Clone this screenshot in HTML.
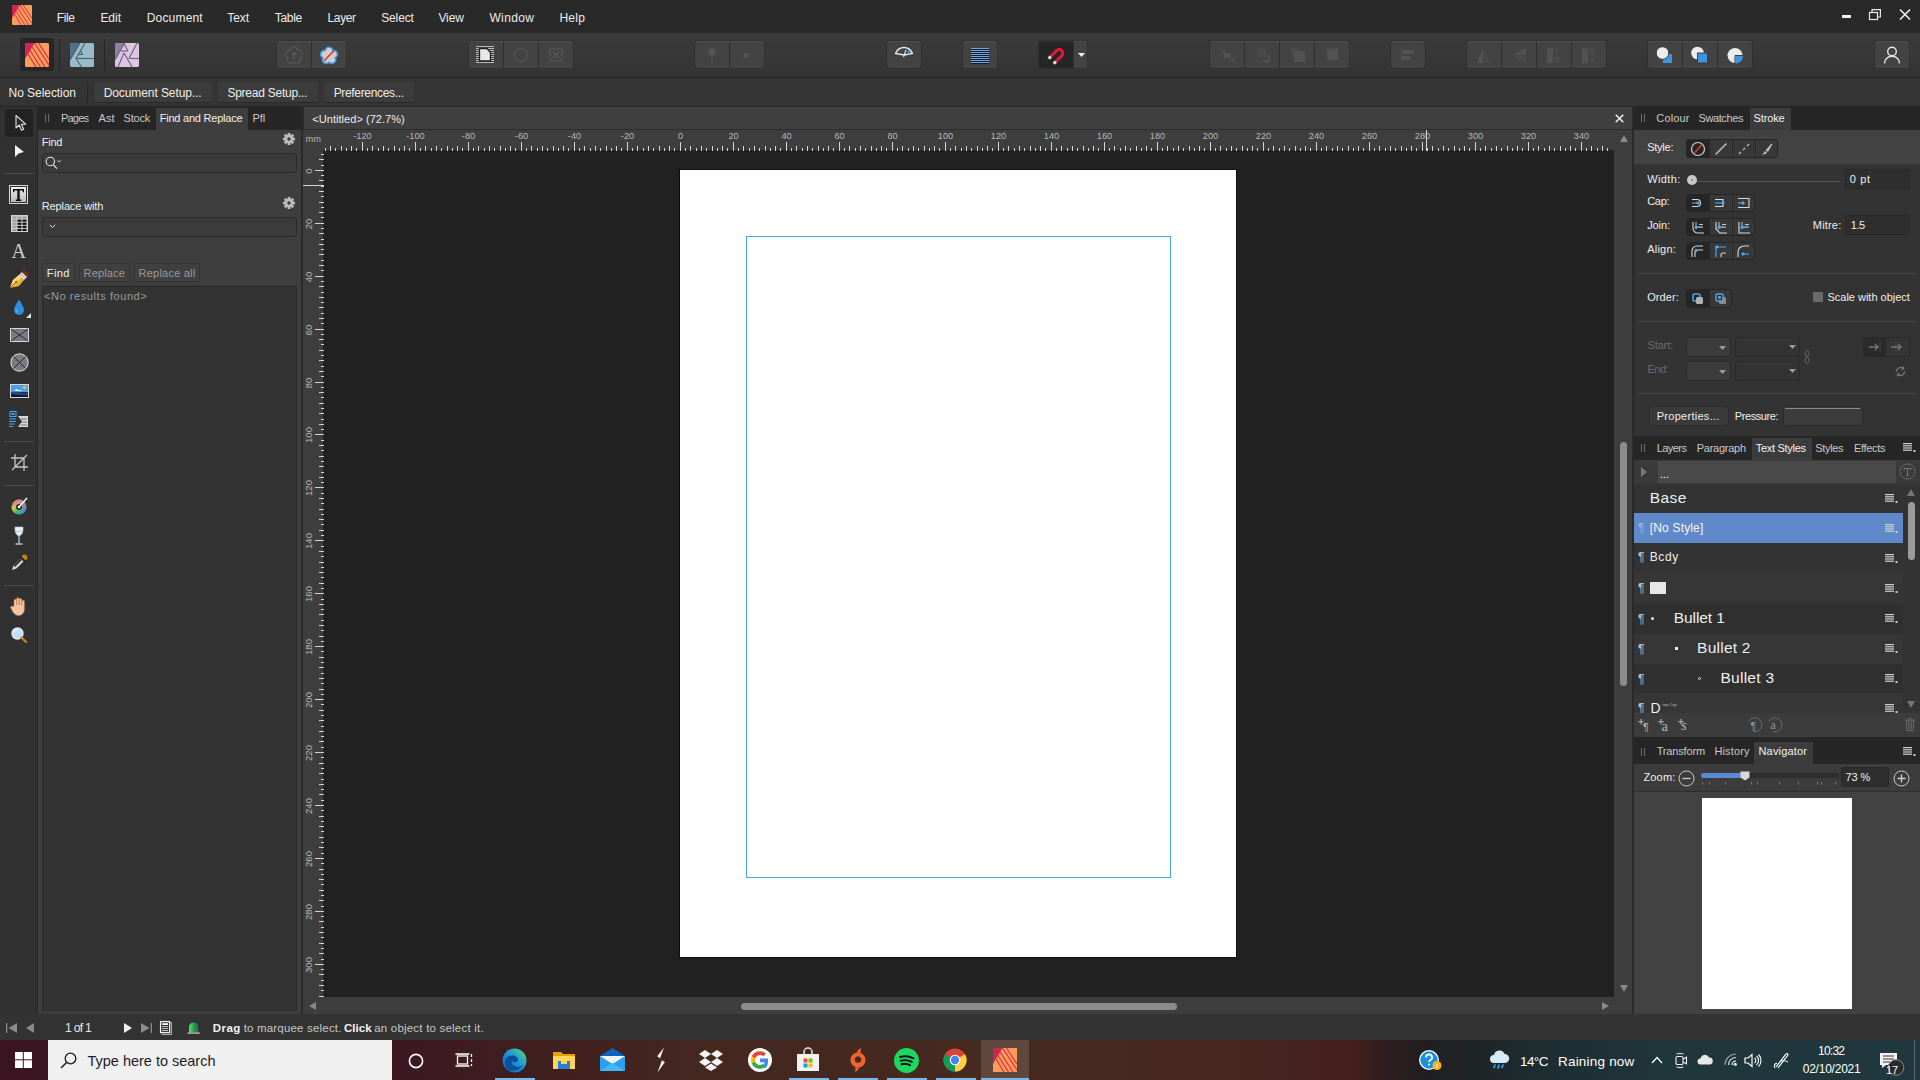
<!DOCTYPE html>
<html><head><meta charset="utf-8">
<style>
*{box-sizing:border-box;margin:0;padding:0}
html,body{width:1920px;height:1080px;overflow:hidden;background:#2b2b2b;font-family:"Liberation Sans",sans-serif;color:#e6e6e6;font-size:12px;position:relative}
.a{position:absolute}
.t{position:absolute;white-space:nowrap;line-height:1}
svg.a{overflow:visible}
</style></head><body>
<div class="a" style="left:0px;top:0px;width:1920px;height:33px;background:#292929;"></div>
<svg class="a" style="left:12px;top:5px" width="20" height="20" viewBox="0 0 24 24"><defs><clipPath id="pc125"><rect x="0" y="0" width="24" height="24" rx="1.5"/></clipPath></defs>
<g clip-path="url(#pc125)"><rect width="24" height="24" fill="#ff9c58"/>
<polygon points="0,0 9.5,0 0,16" fill="#cf2651"/>
<g stroke="#cf2651" stroke-width="1.1">
<line x1="9.5" y1="0" x2="24" y2="22"/><line x1="13.5" y1="0" x2="24" y2="16"/>
<line x1="7.2" y1="4" x2="20" y2="24"/><line x1="5" y1="7.5" x2="15.5" y2="24"/><line x1="3" y1="11" x2="11" y2="24"/>
</g></g></svg>
<div class="t" style="left:56.699999999999996px;top:11.84px;font-size:12px;color:#ececec;font-weight:normal;font-family:'Liberation Sans',sans-serif;letter-spacing:-0.345px;">File</div>
<div class="t" style="left:100.4px;top:11.84px;font-size:12px;color:#ececec;font-weight:normal;font-family:'Liberation Sans',sans-serif;letter-spacing:-0.026px;">Edit</div>
<div class="t" style="left:146.70000000000002px;top:11.84px;font-size:12px;color:#ececec;font-weight:normal;font-family:'Liberation Sans',sans-serif;letter-spacing:0.187px;">Document</div>
<div class="t" style="left:227.3px;top:11.84px;font-size:12px;color:#ececec;font-weight:normal;font-family:'Liberation Sans',sans-serif;letter-spacing:-0.069px;">Text</div>
<div class="t" style="left:274.7px;top:11.84px;font-size:12px;color:#ececec;font-weight:normal;font-family:'Liberation Sans',sans-serif;letter-spacing:-0.296px;">Table</div>
<div class="t" style="left:327.5px;top:11.84px;font-size:12px;color:#ececec;font-weight:normal;font-family:'Liberation Sans',sans-serif;letter-spacing:-0.354px;">Layer</div>
<div class="t" style="left:381.2px;top:11.84px;font-size:12px;color:#ececec;font-weight:normal;font-family:'Liberation Sans',sans-serif;letter-spacing:-0.130px;">Select</div>
<div class="t" style="left:438.4px;top:11.84px;font-size:12px;color:#ececec;font-weight:normal;font-family:'Liberation Sans',sans-serif;letter-spacing:-0.064px;">View</div>
<div class="t" style="left:489.4px;top:11.84px;font-size:12px;color:#ececec;font-weight:normal;font-family:'Liberation Sans',sans-serif;letter-spacing:0.384px;">Window</div>
<div class="t" style="left:559.4px;top:11.84px;font-size:12px;color:#ececec;font-weight:normal;font-family:'Liberation Sans',sans-serif;letter-spacing:0.307px;">Help</div>
<div class="a" style="left:1842px;top:15px;width:9px;height:3px;background:#f0f0f0;"></div>
<svg class="a" style="left:1869px;top:9px;" width="13" height="11" viewBox="0 0 13 11"><rect x="0.5" y="3.5" width="8" height="7" fill="none" stroke="#e8e8e8" stroke-width="1.2"/><path d="M3 3.5V0.6h8.4v7.4H8.5" fill="none" stroke="#e8e8e8" stroke-width="1.2"/></svg>
<svg class="a" style="left:1899px;top:9px;" width="12" height="11" viewBox="0 0 12 11"><path d="M1 0.5L11 10.5M11 0.5L1 10.5" stroke="#f0f0f0" stroke-width="1.6"/></svg>
<div class="a" style="left:0px;top:33px;width:1920px;height:44px;background:linear-gradient(#3b3b3b,#343434);"></div>
<div class="a" style="left:0px;top:77px;width:1920px;height:1px;background:#232323;"></div>
<div class="a" style="left:20px;top:38px;width:34px;height:33px;background:#262626;border-radius:3px;"></div>
<svg class="a" style="left:25px;top:43px" width="24" height="24" viewBox="0 0 24 24"><defs><clipPath id="pc2543"><rect x="0" y="0" width="24" height="24" rx="1.5"/></clipPath></defs>
<g clip-path="url(#pc2543)"><rect width="24" height="24" fill="#ff9c58"/>
<polygon points="0,0 9.5,0 0,16" fill="#cf2651"/>
<g stroke="#cf2651" stroke-width="1.1">
<line x1="9.5" y1="0" x2="24" y2="22"/><line x1="13.5" y1="0" x2="24" y2="16"/>
<line x1="7.2" y1="4" x2="20" y2="24"/><line x1="5" y1="7.5" x2="15.5" y2="24"/><line x1="3" y1="11" x2="11" y2="24"/>
</g></g></svg>
<div class="a" style="left:59px;top:39px;width:1px;height:32px;background:#262626;"></div>
<svg class="a" style="left:70px;top:43px;" width="24" height="24" viewBox="0 0 24 24"><rect width="24" height="24" rx="1.5" fill="#97bcc8"/><polygon points="0,0 10,0 0,17" fill="#577089"/>
<g stroke="#4a5f70" stroke-width="1.1" fill="none"><line x1="10" y1="0" x2="0" y2="17"/><line x1="15" y1="0" x2="6" y2="15.5"/><path d="M6 15.5L11.5 24"/><path d="M6 15.5H24"/><path d="M8.5 11.5L12.5 11.5L10.5 8"/></g></svg>
<div class="a" style="left:104px;top:39px;width:1px;height:32px;background:#262626;"></div>
<svg class="a" style="left:115px;top:43px;" width="24" height="24" viewBox="0 0 24 24"><rect width="24" height="24" rx="1.5" fill="#dcc6e0"/><polygon points="0,0 10,0 0,17" fill="#8e7fa3"/>
<g stroke="#6f5f80" stroke-width="1.1" fill="none"><path d="M9.5 0L0 17"/><path d="M22 0L14 15.5"/><path d="M6 8H13"/><path d="M9 0.5L13 8"/><path d="M14 15.5H24"/><path d="M9 10L3 24"/><path d="M9 10L17 24"/></g></svg>
<div class="a" style="left:276px;top:40px;width:71px;height:29px;background:#313131;border-radius:3px;"></div>
<div class="a" style="left:277px;top:41px;width:69px;height:27px;background:#434343;border-radius:2px;border-top:1px solid #4e4e4e;"></div>
<div class="a" style="left:311px;top:42px;width:1px;height:26px;background:#2f2f2f;"></div>
<svg class="a" style="left:284px;top:45px;" width="20" height="22" viewBox="0 0 20 22"><path d="M18.11,10.70 L17.96,11.03 L17.78,11.35 L17.56,11.65 L17.30,11.93 L17.00,12.19 L16.64,12.40 L16.17,12.56 L16.08,12.82 L16.37,13.22 L16.54,13.61 L16.63,13.99 L16.68,14.37 L16.68,14.74 L16.64,15.11 L16.56,15.47 L16.45,15.82 L16.31,16.15 L16.14,16.47 L15.94,16.77 L15.72,17.05 L15.47,17.31 L15.20,17.55 L14.91,17.76 L14.60,17.94 L14.27,18.10 L13.94,18.23 L13.59,18.32 L13.23,18.39 L12.87,18.42 L12.51,18.41 L12.14,18.38 L11.78,18.30 L11.43,18.18 L11.08,18.03 L10.75,17.82 L10.43,17.54 L10.13,17.14 L9.87,17.14 L9.57,17.54 L9.25,17.82 L8.92,18.03 L8.57,18.18 L8.22,18.30 L7.86,18.38 L7.49,18.41 L7.13,18.42 L6.77,18.39 L6.41,18.32 L6.06,18.23 L5.73,18.10 L5.40,17.94 L5.09,17.76 L4.80,17.55 L4.53,17.31 L4.28,17.05 L4.06,16.77 L3.86,16.47 L3.69,16.15 L3.55,15.82 L3.44,15.47 L3.36,15.11 L3.32,14.74 L3.32,14.37 L3.37,13.99 L3.46,13.61 L3.63,13.22 L3.92,12.82 L3.83,12.56 L3.36,12.40 L3.00,12.19 L2.70,11.93 L2.44,11.65 L2.22,11.35 L2.04,11.03 L1.89,10.70 L1.77,10.36 L1.69,10.00 L1.64,9.64 L1.62,9.28 L1.64,8.92 L1.69,8.57 L1.77,8.21 L1.88,7.87 L2.02,7.54 L2.19,7.22 L2.39,6.92 L2.62,6.64 L2.87,6.38 L3.14,6.14 L3.44,5.93 L3.75,5.75 L4.09,5.60 L4.45,5.48 L4.82,5.41 L5.21,5.38 L5.63,5.42 L6.10,5.57 L6.32,5.41 L6.33,4.91 L6.42,4.50 L6.57,4.14 L6.76,3.81 L6.98,3.50 L7.22,3.23 L7.49,2.99 L7.79,2.77 L8.10,2.58 L8.42,2.42 L8.76,2.30 L9.11,2.20 L9.46,2.14 L9.82,2.10 L10.18,2.10 L10.54,2.14 L10.89,2.20 L11.24,2.30 L11.58,2.42 L11.90,2.58 L12.21,2.77 L12.51,2.99 L12.78,3.23 L13.02,3.50 L13.24,3.81 L13.43,4.14 L13.58,4.50 L13.67,4.91 L13.68,5.41 L13.90,5.57 L14.37,5.42 L14.79,5.38 L15.18,5.41 L15.55,5.48 L15.91,5.60 L16.25,5.75 L16.56,5.93 L16.86,6.14 L17.13,6.38 L17.38,6.64 L17.61,6.92 L17.81,7.22 L17.98,7.54 L18.12,7.87 L18.23,8.21 L18.31,8.57 L18.36,8.92 L18.38,9.28 L18.36,9.64 L18.31,10.00 L18.23,10.36Z" fill="none" stroke="#575757" stroke-width="1.3"/><path d="M10 14.5V7.5M7.6 9.9L10 7.5l2.4 2.4" stroke="#5a5a5a" stroke-width="1.4" fill="none"/></svg>
<svg class="a" style="left:319px;top:45px;" width="20" height="22" viewBox="0 0 20 22"><path d="M18.11,10.70 L17.96,11.03 L17.78,11.35 L17.56,11.65 L17.30,11.93 L17.00,12.19 L16.64,12.40 L16.17,12.56 L16.08,12.82 L16.37,13.22 L16.54,13.61 L16.63,13.99 L16.68,14.37 L16.68,14.74 L16.64,15.11 L16.56,15.47 L16.45,15.82 L16.31,16.15 L16.14,16.47 L15.94,16.77 L15.72,17.05 L15.47,17.31 L15.20,17.55 L14.91,17.76 L14.60,17.94 L14.27,18.10 L13.94,18.23 L13.59,18.32 L13.23,18.39 L12.87,18.42 L12.51,18.41 L12.14,18.38 L11.78,18.30 L11.43,18.18 L11.08,18.03 L10.75,17.82 L10.43,17.54 L10.13,17.14 L9.87,17.14 L9.57,17.54 L9.25,17.82 L8.92,18.03 L8.57,18.18 L8.22,18.30 L7.86,18.38 L7.49,18.41 L7.13,18.42 L6.77,18.39 L6.41,18.32 L6.06,18.23 L5.73,18.10 L5.40,17.94 L5.09,17.76 L4.80,17.55 L4.53,17.31 L4.28,17.05 L4.06,16.77 L3.86,16.47 L3.69,16.15 L3.55,15.82 L3.44,15.47 L3.36,15.11 L3.32,14.74 L3.32,14.37 L3.37,13.99 L3.46,13.61 L3.63,13.22 L3.92,12.82 L3.83,12.56 L3.36,12.40 L3.00,12.19 L2.70,11.93 L2.44,11.65 L2.22,11.35 L2.04,11.03 L1.89,10.70 L1.77,10.36 L1.69,10.00 L1.64,9.64 L1.62,9.28 L1.64,8.92 L1.69,8.57 L1.77,8.21 L1.88,7.87 L2.02,7.54 L2.19,7.22 L2.39,6.92 L2.62,6.64 L2.87,6.38 L3.14,6.14 L3.44,5.93 L3.75,5.75 L4.09,5.60 L4.45,5.48 L4.82,5.41 L5.21,5.38 L5.63,5.42 L6.10,5.57 L6.32,5.41 L6.33,4.91 L6.42,4.50 L6.57,4.14 L6.76,3.81 L6.98,3.50 L7.22,3.23 L7.49,2.99 L7.79,2.77 L8.10,2.58 L8.42,2.42 L8.76,2.30 L9.11,2.20 L9.46,2.14 L9.82,2.10 L10.18,2.10 L10.54,2.14 L10.89,2.20 L11.24,2.30 L11.58,2.42 L11.90,2.58 L12.21,2.77 L12.51,2.99 L12.78,3.23 L13.02,3.50 L13.24,3.81 L13.43,4.14 L13.58,4.50 L13.67,4.91 L13.68,5.41 L13.90,5.57 L14.37,5.42 L14.79,5.38 L15.18,5.41 L15.55,5.48 L15.91,5.60 L16.25,5.75 L16.56,5.93 L16.86,6.14 L17.13,6.38 L17.38,6.64 L17.61,6.92 L17.81,7.22 L17.98,7.54 L18.12,7.87 L18.23,8.21 L18.31,8.57 L18.36,8.92 L18.38,9.28 L18.36,9.64 L18.31,10.00 L18.23,10.36Z" fill="#cfcfcf" stroke="#3d95e0" stroke-width="1.5"/><path d="M5 16L15 5.5" stroke="#e53030" stroke-width="1.6"/></svg>
<div class="a" style="left:468px;top:40px;width:106px;height:29px;background:#313131;border-radius:3px;"></div>
<div class="a" style="left:469px;top:41px;width:104px;height:27px;background:#434343;border-radius:2px;border-top:1px solid #4e4e4e;"></div>
<div class="a" style="left:503px;top:42px;width:1px;height:26px;background:#2f2f2f;"></div>
<div class="a" style="left:538px;top:42px;width:1px;height:26px;background:#2f2f2f;"></div>
<svg class="a" style="left:476px;top:46px;" width="20" height="18" viewBox="0 0 20 18"><g stroke="#d8d8d8" stroke-width="0.8"><line x1="0" y1="0.5" x2="18" y2="0.5"/><line x1="0" y1="2.5" x2="18" y2="2.5"/><line x1="0" y1="4.5" x2="18" y2="4.5"/><line x1="0" y1="6.5" x2="18" y2="6.5"/><line x1="0" y1="8.5" x2="18" y2="8.5"/><line x1="0" y1="10.5" x2="18" y2="10.5"/><line x1="0" y1="12.5" x2="18" y2="12.5"/><line x1="0" y1="14.5" x2="18" y2="14.5"/><line x1="0" y1="16.5" x2="18" y2="16.5"/></g><path d="M3.5 2.5H11l3.5 4V15H3.5z" fill="#e8e8e8" stroke="#1e1e1e" stroke-width="1.3"/></svg>
<svg class="a" style="left:511px;top:46px;" width="20" height="18" viewBox="0 0 20 18"><circle cx="10" cy="9" r="6.5" fill="none" stroke="#585858" stroke-width="1.1"/></svg>
<svg class="a" style="left:546px;top:46px;" width="20" height="18" viewBox="0 0 20 18"><rect x="4" y="3" width="12" height="12" fill="none" stroke="#585858" stroke-width="1.1"/><path d="M7 6L13 12M13 6L7 12" stroke="#585858" stroke-width="1.1"/></svg>
<div class="a" style="left:694px;top:40px;width:71px;height:29px;background:#313131;border-radius:3px;"></div>
<div class="a" style="left:695px;top:41px;width:69px;height:27px;background:#434343;border-radius:2px;border-top:1px solid #4e4e4e;"></div>
<div class="a" style="left:729px;top:42px;width:1px;height:26px;background:#2f2f2f;"></div>
<svg class="a" style="left:702px;top:44px;" width="20" height="22" viewBox="0 0 20 22"><circle cx="10" cy="8" r="3.8" fill="#565656"/><rect x="9.5" y="10" width="1" height="9" fill="#565656"/></svg>
<svg class="a" style="left:736px;top:46px;" width="20" height="18" viewBox="0 0 20 18"><rect x="7.5" y="7" width="5" height="5" fill="#555"/></svg>
<div class="a" style="left:886px;top:40px;width:36px;height:29px;background:#313131;border-radius:3px;"></div>
<div class="a" style="left:887px;top:41px;width:34px;height:27px;background:#434343;border-radius:2px;border-top:1px solid #4e4e4e;"></div>
<svg class="a" style="left:893px;top:44px;" width="22" height="20" viewBox="0 0 22 20"><path d="M2.5 9.5C4.5 5 8 3.5 11 3.5s6.5 1.5 8.5 6L11 11z" fill="none" stroke="#e8e8e8" stroke-width="1.3"/><path d="M15 5.5l3 3.5-3.5 1z" fill="#3d95e0"/><path d="M13 6L10.5 13" stroke="#e8e8e8" stroke-width="1.1"/></svg>
<div class="a" style="left:962px;top:40px;width:36px;height:29px;background:#313131;border-radius:3px;"></div>
<div class="a" style="left:963px;top:41px;width:34px;height:27px;background:#434343;border-radius:2px;border-top:1px solid #4e4e4e;"></div>
<svg class="a" style="left:971px;top:47px;" width="18" height="18" viewBox="0 0 18 18"><rect x="0" y="1" width="18" height="16" fill="#1e1e1e"/><g fill="#6aa6ee"><rect x="0" y="1" width="18" height="1"/><rect x="0" y="3" width="18" height="1"/><rect x="0" y="5" width="18" height="1"/><rect x="0" y="7" width="18" height="1"/><rect x="0" y="9" width="18" height="1"/><rect x="0" y="11" width="18" height="1"/><rect x="0" y="13" width="18" height="1"/><rect x="0" y="15" width="18" height="1"/></g></svg>
<div class="a" style="left:1038px;top:40px;width:50px;height:29px;background:#313131;border-radius:3px;"></div>
<div class="a" style="left:1039px;top:42px;width:34px;height:26px;background:#262626;border-radius:2px 0 0 2px;"></div>
<div class="a" style="left:1074px;top:41px;width:13px;height:27px;background:#434343;border-radius:0 2px 2px 0;border-top:1px solid #4e4e4e;"></div>
<svg class="a" style="left:1046px;top:45px;" width="22" height="22" viewBox="0 0 22 22"><g transform="translate(13.2 8.2) rotate(45)"><path d="M-3.6 8.5V0a3.6 3.6 0 0 1 7.2 0v8.5" fill="none" stroke="#e3173a" stroke-width="3"/><path d="M-3.6 8.3v3M3.6 8.3v3" stroke="#e6e6e6" stroke-width="3"/></g></svg>
<svg class="a" style="left:1077.5px;top:52.5px;" width="7" height="4" viewBox="0 0 7 4"><path d="M0 0h7L3.5 4z" fill="#f2f2f2"/></svg>
<div class="a" style="left:1209px;top:40px;width:141px;height:29px;background:#313131;border-radius:3px;"></div>
<div class="a" style="left:1210px;top:41px;width:139px;height:27px;background:#434343;border-radius:2px;border-top:1px solid #4e4e4e;"></div>
<div class="a" style="left:1244px;top:42px;width:1px;height:26px;background:#2f2f2f;"></div>
<div class="a" style="left:1279px;top:42px;width:1px;height:26px;background:#2f2f2f;"></div>
<div class="a" style="left:1314px;top:42px;width:1px;height:26px;background:#2f2f2f;"></div>
<svg class="a" style="left:1218px;top:45px;" width="20" height="20" viewBox="0 0 20 20"><rect x="3" y="4" width="6" height="5" fill="#4a4a4a"/><rect x="6" y="8" width="7" height="5" fill="#525252"/><rect x="11" y="12" width="6" height="5" fill="#4a4a4a"/></svg>
<svg class="a" style="left:1253px;top:45px;" width="20" height="20" viewBox="0 0 20 20"><rect x="4" y="3" width="9" height="9" fill="#4a4a4a"/><path d="M10 15h5v-6h2v8h-7z" fill="#525252"/></svg>
<svg class="a" style="left:1288px;top:45px;" width="20" height="20" viewBox="0 0 20 20"><rect x="3" y="3" width="7" height="7" fill="#4a4a4a"/><rect x="6" y="6" width="11" height="11" fill="#525252"/></svg>
<svg class="a" style="left:1323px;top:45px;" width="20" height="20" viewBox="0 0 20 20"><rect x="3" y="3" width="12" height="12" fill="#4a4a4a"/><rect x="5" y="5" width="10" height="10" fill="#525252"/></svg>
<div class="a" style="left:1390px;top:40px;width:36px;height:29px;background:#313131;border-radius:3px;"></div>
<div class="a" style="left:1391px;top:41px;width:34px;height:27px;background:#434343;border-radius:2px;border-top:1px solid #4e4e4e;"></div>
<svg class="a" style="left:1399px;top:45px;" width="20" height="20" viewBox="0 0 20 20"><rect x="2" y="2" width="1" height="16" fill="#4a4a4a"/><rect x="3" y="5" width="12" height="4" fill="#525252"/><rect x="3" y="11" width="8" height="4" fill="#525252"/></svg>
<div class="a" style="left:1466px;top:40px;width:141px;height:29px;background:#313131;border-radius:3px;"></div>
<div class="a" style="left:1467px;top:41px;width:139px;height:27px;background:#434343;border-radius:2px;border-top:1px solid #4e4e4e;"></div>
<div class="a" style="left:1501px;top:42px;width:1px;height:26px;background:#2f2f2f;"></div>
<div class="a" style="left:1536px;top:42px;width:1px;height:26px;background:#2f2f2f;"></div>
<div class="a" style="left:1571px;top:42px;width:1px;height:26px;background:#2f2f2f;"></div>
<svg class="a" style="left:1474px;top:45px;" width="20" height="20" viewBox="0 0 20 20"><path d="M9 3L3 18h6z" fill="#525252"/><path d="M10 3l6 15h-6z" fill="#4a4a4a"/></svg>
<svg class="a" style="left:1509px;top:45px;" width="20" height="20" viewBox="0 0 20 20"><path d="M17 3L3 10h14z" fill="#525252"/><path d="M17 11H3l14 7z" fill="#4a4a4a"/></svg>
<svg class="a" style="left:1544px;top:45px;" width="20" height="20" viewBox="0 0 20 20"><rect x="3" y="3" width="6" height="15" fill="#525252"/><rect x="10" y="11" width="6" height="7" fill="#4a4a4a"/><path d="M12 8V5h3M12 5l1.5-1.5M12 5l1.5 1.5" stroke="#525252" fill="none"/></svg>
<svg class="a" style="left:1579px;top:45px;" width="20" height="20" viewBox="0 0 20 20"><rect x="3" y="3" width="6" height="15" fill="#525252"/><rect x="10" y="3" width="6" height="7" fill="#4a4a4a"/><path d="M15 12v3h-3M12 15l1.5-1.5M12 15l1.5 1.5" stroke="#525252" fill="none"/></svg>
<div class="a" style="left:1647px;top:40px;width:106px;height:29px;background:#313131;border-radius:3px;"></div>
<div class="a" style="left:1648px;top:41px;width:104px;height:27px;background:#434343;border-radius:2px;border-top:1px solid #4e4e4e;"></div>
<div class="a" style="left:1682px;top:42px;width:1px;height:26px;background:#2f2f2f;"></div>
<div class="a" style="left:1717px;top:42px;width:1px;height:26px;background:#2f2f2f;"></div>
<svg class="a" style="left:1654px;top:44px;" width="22" height="22" viewBox="0 0 22 22"><rect x="9" y="10" width="9" height="9" fill="#3d95e0"/><circle cx="8.5" cy="9" r="6.3" fill="#ececec" stroke="#3d3d3d" stroke-width="1"/></svg>
<svg class="a" style="left:1689px;top:44px;" width="22" height="22" viewBox="0 0 22 22"><circle cx="8.5" cy="9" r="6.3" fill="#ececec"/><rect x="8.5" y="9" width="10" height="10" fill="#3d95e0" stroke="#3d3d3d" stroke-width="1"/></svg>
<svg class="a" style="left:1724px;top:44px;" width="22" height="22" viewBox="0 0 22 22"><circle cx="11" cy="11.5" r="7.5" fill="#ececec"/><path d="M11.5 12H19a7.5 7.5 0 0 1-7.5 7.5z" fill="#3d95e0"/><path d="M11 11.5h8.5M11 11.5v8.5" stroke="#3d3d3d" stroke-width="1"/></svg>
<div class="a" style="left:1874px;top:40px;width:36px;height:29px;background:#313131;border-radius:3px;"></div>
<div class="a" style="left:1875px;top:41px;width:34px;height:27px;background:#434343;border-radius:2px;border-top:1px solid #4e4e4e;"></div>
<svg class="a" style="left:1881px;top:44px;" width="22" height="22" viewBox="0 0 22 22"><circle cx="11" cy="7.5" r="4.3" fill="none" stroke="#e6e6e6" stroke-width="1.4"/><path d="M3.5 19.5c0-4.5 3.3-7.3 7.5-7.3s7.5 2.8 7.5 7.3" fill="none" stroke="#e6e6e6" stroke-width="1.4"/></svg>
<div class="a" style="left:0px;top:78px;width:1920px;height:28px;background:#343434;"></div>
<div class="a" style="left:0px;top:106px;width:1920px;height:1px;background:#262626;"></div>
<div class="t" style="left:8.6px;top:86.84px;font-size:12px;color:#eeeeee;font-weight:normal;font-family:'Liberation Sans',sans-serif;letter-spacing:-0.058px;">No Selection</div>
<div class="a" style="left:87px;top:82px;width:1px;height:21px;background:#262626;"></div>
<div class="a" style="left:94px;top:82px;width:118px;height:21px;background:#3c3c3c;border-radius:2px;border-bottom:1px solid #2a2a2a;"></div>
<div class="t" style="left:103.7px;top:86.84px;font-size:12px;color:#ececec;font-weight:normal;font-family:'Liberation Sans',sans-serif;letter-spacing:-0.087px;">Document Setup...</div>
<div class="a" style="left:218px;top:82px;width:100px;height:21px;background:#3c3c3c;border-radius:2px;border-bottom:1px solid #2a2a2a;"></div>
<div class="t" style="left:227.4px;top:86.84px;font-size:12px;color:#ececec;font-weight:normal;font-family:'Liberation Sans',sans-serif;letter-spacing:-0.242px;">Spread Setup...</div>
<div class="a" style="left:324px;top:82px;width:90px;height:21px;background:#3c3c3c;border-radius:2px;border-bottom:1px solid #2a2a2a;"></div>
<div class="t" style="left:333.7px;top:86.84px;font-size:12px;color:#ececec;font-weight:normal;font-family:'Liberation Sans',sans-serif;letter-spacing:-0.339px;">Preferences...</div>
<div class="a" style="left:0px;top:107px;width:37px;height:907px;background:#313131;"></div>
<div class="a" style="left:37px;top:107px;width:1px;height:907px;background:#262626;"></div>
<div class="a" style="left:5px;top:109px;width:28px;height:28px;background:#232323;border-radius:3px;"></div>
<svg class="a" style="left:13.5px;top:114px;" width="14" height="18" viewBox="0 0 14 18"><path d="M2 1.5V14l3.2-3 2.3 5.2 2.2-1-2.3-5h4.3z" fill="#2a2a2a" stroke="#e0e0e0" stroke-width="1.1" stroke-linejoin="round"/></svg>
<svg class="a" style="left:13px;top:144px;" width="12" height="14" viewBox="0 0 12 14"><path d="M2 1v12l3.5-3.5L11 8z" fill="#f2f2f2"/></svg>
<div class="a" style="left:4px;top:173px;width:30px;height:1px;background:#4a4a4a;"></div>
<svg class="a" style="left:9px;top:185px;" width="20" height="20" viewBox="0 0 20 20"><rect x="0.5" y="0.5" width="18" height="18" fill="none" stroke="#d8d8d8" stroke-width="1"/><rect x="2" y="2" width="15" height="15" fill="url(#tg)"/><defs><linearGradient id="tg" x1="0" y1="0" x2="0" y2="1"><stop offset="0" stop-color="#f2f2f2"/><stop offset="1" stop-color="#b8b8b8"/></linearGradient></defs><path d="M4 4h11v3.2h-1.1l-.6-1.6h-2.6v9h1.5V16H6.8v-1.4h1.5v-9H5.7l-.6 1.6H4z" fill="#111"/></svg>
<svg class="a" style="left:11px;top:215px;" width="17" height="17" viewBox="0 0 17 17"><rect x="0" y="0" width="17" height="17" fill="#d0d0d0"/><rect x="1.5" y="1.5" width="4" height="2.1" fill="#9a9a9a"/><rect x="6.5" y="1.5" width="4" height="2.1" fill="#9a9a9a"/><rect x="11.5" y="1.5" width="4" height="2.1" fill="#9a9a9a"/><rect x="1.5" y="4.6" width="4" height="2.1" fill="#9a9a9a"/><rect x="6.5" y="4.6" width="4" height="2.1" fill="#0a0a0a"/><rect x="11.5" y="4.6" width="4" height="2.1" fill="#0a0a0a"/><rect x="1.5" y="7.7" width="4" height="2.1" fill="#9a9a9a"/><rect x="6.5" y="7.7" width="4" height="2.1" fill="#0a0a0a"/><rect x="11.5" y="7.7" width="4" height="2.1" fill="#0a0a0a"/><rect x="1.5" y="10.8" width="4" height="2.1" fill="#9a9a9a"/><rect x="6.5" y="10.8" width="4" height="2.1" fill="#0a0a0a"/><rect x="11.5" y="10.8" width="4" height="2.1" fill="#0a0a0a"/><rect x="1.5" y="13.9" width="4" height="2.1" fill="#9a9a9a"/><rect x="6.5" y="13.9" width="4" height="2.1" fill="#0a0a0a"/><rect x="11.5" y="13.9" width="4" height="2.1" fill="#0a0a0a"/></svg>
<div class="t" style="left:11.5px;top:241.37px;font-size:20px;color:#d2d2d2;font-weight:normal;font-family:'Liberation Serif',serif;">A</div>
<svg class="a" style="left:9px;top:270px;" width="20" height="19" viewBox="0 0 20 19"><path d="M1 18L4 10l6-5 5 5-5 6z" fill="#f0b030"/><path d="M1 18L4 10l6-5 2.5 2.5z" fill="#ffd87a"/><path d="M1 18l6-6" stroke="#7a5000" stroke-width="0.8"/><circle cx="7.2" cy="11.8" r="1" fill="#7a5000"/><path d="M10 5l3-3 5 5-3 3z" fill="#e8e8e8"/><path d="M13 2l2-2 5 5-2 2z" fill="#8a2a1a"/><path d="M11.5 3.5l5 5" stroke="#777" stroke-width="0.8"/></svg>
<svg class="a" style="left:13px;top:299px;" width="12" height="17" viewBox="0 0 12 17"><path d="M6 0.5C6 0.5 1 7.5 1 11a5 5 0 0 0 10 0C11 7.5 6 0.5 6 0.5z" fill="#2f8fdc"/><path d="M3.5 10.5a3 3 0 0 0 1.5 3" stroke="#6cc0ff" stroke-width="1" fill="none"/></svg>
<svg class="a" style="left:26px;top:313px;" width="5" height="5" viewBox="0 0 5 5"><path d="M5 0v5H0z" fill="#e8e8e8"/></svg>
<svg class="a" style="left:10px;top:328px;" width="19" height="14" viewBox="0 0 19 14"><rect x="0.5" y="0.5" width="18" height="13" fill="#7a7a7a" stroke="#d8d8d8" stroke-width="1"/><path d="M1 1L18 13M18 1L1 13" stroke="#1c2850" stroke-width="1"/></svg>
<svg class="a" style="left:10px;top:353px;" width="19" height="19" viewBox="0 0 19 19"><circle cx="9.5" cy="9.5" r="8.6" fill="#7a7a7a" stroke="#cfcfcf" stroke-width="1.2"/><path d="M3.6 3.6l11.8 11.8M15.4 3.6L3.6 15.4" stroke="#1c2850" stroke-width="1"/></svg>
<svg class="a" style="left:10px;top:384px;" width="19" height="14" viewBox="0 0 19 14"><rect x="0.5" y="0.5" width="18" height="13" fill="#1a2a50" stroke="#d8d8d8" stroke-width="1"/><rect x="1" y="1" width="17" height="7" fill="#4aa2ee"/><path d="M4 7l2.5-2 2 1.5 1.5-.5 2 1z" fill="#fff"/><path d="M1 8.5c3-1.5 6-1 9 .3 2.5 1 5.5.8 8-.3V13H1z" fill="#2d4a7a"/><path d="M1 10.5c4-1 9 1.5 17 0.5V13H1z" fill="#0e1a38"/><circle cx="14.5" cy="3.6" r="1.7" fill="#ffb81c"/></svg>
<svg class="a" style="left:9px;top:411px;" width="20" height="17" viewBox="0 0 20 17"><rect x="1" y="0.5" width="6" height="5" fill="none" stroke="#4aa8f0" stroke-width="1"/><rect x="2.5" y="2" width="3" height="2" fill="#4aa8f0"/><path d="M0 8h7M0 10.5h7M0 13h6M0 15.5h4" stroke="#4aa8f0" stroke-width="1.2"/><path d="M9 5h10v11H9l4-5.5z" fill="#d8d8d8"/><path d="M12 8h6M13 11h5M12 14h6" stroke="#555" stroke-width="0.8"/></svg>
<div class="a" style="left:4px;top:441px;width:30px;height:1px;background:#4a4a4a;"></div>
<svg class="a" style="left:11px;top:454px;" width="17" height="17" viewBox="0 0 17 17"><path d="M4 0v13h13M0 4h13v13M1 16L16 1" stroke="#c6c6c6" stroke-width="1.3" fill="none"/></svg>
<div class="a" style="left:4px;top:485px;width:30px;height:1px;background:#4a4a4a;"></div>
<svg class="a" style="left:11px;top:497px;" width="17" height="18" viewBox="0 0 17 18"><defs><linearGradient id="cw1" x1="0" y1="0" x2="1" y2="1"><stop offset="0" stop-color="#ff3a3a"/><stop offset="0.35" stop-color="#ffd020"/><stop offset="0.6" stop-color="#30c040"/><stop offset="1" stop-color="#2060ff"/></linearGradient><linearGradient id="cw2" x1="1" y1="0" x2="0" y2="1"><stop offset="0" stop-color="#ff40c0" stop-opacity="0.9"/><stop offset="1" stop-color="#20d0ff" stop-opacity="0"/></linearGradient></defs><circle cx="8" cy="10" r="7.5" fill="url(#cw1)"/><circle cx="8" cy="10" r="7.5" fill="url(#cw2)"/><circle cx="8" cy="10" r="3" fill="#2f2f2f"/><path d="M8 10L16 1" stroke="#fff" stroke-width="1.4"/><circle cx="8" cy="10" r="1.3" fill="#fff"/></svg>
<svg class="a" style="left:14px;top:526px;" width="10" height="19" viewBox="0 0 10 19"><path d="M1 1h8c0.3 4-0.5 8-4 9-3.5-1-4.3-5-4-9z" fill="#e8eef8" stroke="#b8c4d8" stroke-width="0.6"/><rect x="4.4" y="10" width="1.2" height="7" fill="#c8d0dc"/><path d="M1.5 18h7" stroke="#c8d0dc" stroke-width="1.4"/><path d="M2 5c1 .5 5 .5 6 0" stroke="#9ab" stroke-width="0.6" fill="none"/></svg>
<svg class="a" style="left:11px;top:554px;" width="17" height="17" viewBox="0 0 17 17"><path d="M1 16l1.5-4.5 7-7 3 3-7 7z" fill="#d8d8d8"/><path d="M2.5 11.5l7-7 1.5 1.5-7 7z" fill="#333"/><path d="M10 3l2-2c1-.8 2.6-.6 3.6.4s1.2 2.6.4 3.6l-2 2z" fill="#c88010"/><path d="M9 2l6 6" stroke="#1a1a1a" stroke-width="1.3"/></svg>
<div class="a" style="left:4px;top:585px;width:30px;height:1px;background:#4a4a4a;"></div>
<svg class="a" style="left:10px;top:597px;" width="18" height="19" viewBox="0 0 18 19"><path d="M4 9V3.5a1.3 1.3 0 0 1 2.6 0V8V2a1.3 1.3 0 0 1 2.6 0v6V2.8a1.3 1.3 0 0 1 2.6 0V8.5V4.5a1.3 1.3 0 0 1 2.6 0V12c0 4-2.5 6.5-6 6.5-2.6 0-4-1.3-5.5-3.5L0.8 11a1.3 1.3 0 0 1 2-1.6z" fill="#f2c4a0" stroke="#b87a50" stroke-width="0.6"/></svg>
<svg class="a" style="left:11px;top:627px;" width="16" height="16" viewBox="0 0 16 16"><circle cx="6.5" cy="6.5" r="5.5" fill="#bfe0ff" stroke="#e8e8e8" stroke-width="1.4"/><path d="M3.5 5a3.5 3.5 0 0 1 3-2.5" stroke="#fff" stroke-width="1" fill="none"/><path d="M10.5 10.5L15 15" stroke="#c8802a" stroke-width="2.4" stroke-linecap="round"/></svg>
<div class="a" style="left:38px;top:107px;width:263px;height:907px;background:#3e3e3e;"></div>
<div class="a" style="left:38px;top:106px;width:263px;height:24px;background:#262626;"></div>
<div class="a" style="left:156px;top:108px;width:92px;height:22px;background:#3e3e3e;"></div>
<div class="a" style="left:45px;top:114px;width:1px;height:8px;background:#6e6e6e;"></div>
<div class="a" style="left:48px;top:114px;width:1px;height:8px;background:#6e6e6e;"></div>
<div class="t" style="left:60.9px;top:112.69px;font-size:11px;color:#c9c9c9;font-weight:normal;font-family:'Liberation Sans',sans-serif;letter-spacing:-0.747px;">Pages</div>
<div class="t" style="left:98.5px;top:112.69px;font-size:11px;color:#c9c9c9;font-weight:normal;font-family:'Liberation Sans',sans-serif;letter-spacing:0.103px;">Ast</div>
<div class="t" style="left:123.5px;top:112.69px;font-size:11px;color:#c9c9c9;font-weight:normal;font-family:'Liberation Sans',sans-serif;letter-spacing:-0.178px;">Stock</div>
<div class="t" style="left:252.6px;top:112.69px;font-size:11px;color:#c9c9c9;font-weight:normal;font-family:'Liberation Sans',sans-serif;letter-spacing:-0.169px;">Pfl</div>
<div class="t" style="left:159.7px;top:112.69px;font-size:11px;color:#f2f2f2;font-weight:normal;font-family:'Liberation Sans',sans-serif;letter-spacing:-0.221px;">Find and Replace</div>
<div class="t" style="left:41.8px;top:136.69px;font-size:11px;color:#eeeeee;font-weight:normal;font-family:'Liberation Sans',sans-serif;letter-spacing:-0.266px;">Find</div>
<svg class="a" style="left:283px;top:133px;" width="12" height="12" viewBox="0 0 12 12"><rect x="4.6" y="0" width="2.8" height="3" transform="rotate(0 6 6)" fill="#bdbdbd"/><rect x="4.6" y="0" width="2.8" height="3" transform="rotate(45 6 6)" fill="#bdbdbd"/><rect x="4.6" y="0" width="2.8" height="3" transform="rotate(90 6 6)" fill="#bdbdbd"/><rect x="4.6" y="0" width="2.8" height="3" transform="rotate(135 6 6)" fill="#bdbdbd"/><rect x="4.6" y="0" width="2.8" height="3" transform="rotate(180 6 6)" fill="#bdbdbd"/><rect x="4.6" y="0" width="2.8" height="3" transform="rotate(225 6 6)" fill="#bdbdbd"/><rect x="4.6" y="0" width="2.8" height="3" transform="rotate(270 6 6)" fill="#bdbdbd"/><rect x="4.6" y="0" width="2.8" height="3" transform="rotate(315 6 6)" fill="#bdbdbd"/><circle cx="6" cy="6" r="4.2" fill="#bdbdbd"/><circle cx="6" cy="6" r="1.7" fill="#3c3c3c"/></svg>
<div class="a" style="left:42px;top:153px;width:255px;height:20px;background:#3b3b3b;border:1px solid #2a2a2a;border-radius:3px;"></div>
<svg class="a" style="left:45px;top:156px;" width="18" height="14" viewBox="0 0 18 14"><circle cx="5.3" cy="5.5" r="4.2" fill="none" stroke="#e6e6e6" stroke-width="1.1"/><path d="M8.3 8.6l3.6 4" stroke="#e6e6e6" stroke-width="1.3"/><path d="M12.6 4.4l1.6 1.6 1.6-1.6" stroke="#e6e6e6" stroke-width="1" fill="none"/></svg>
<div class="t" style="left:41.8px;top:200.69px;font-size:11px;color:#eeeeee;font-weight:normal;font-family:'Liberation Sans',sans-serif;letter-spacing:-0.134px;">Replace with</div>
<svg class="a" style="left:283px;top:197px;" width="12" height="12" viewBox="0 0 12 12"><rect x="4.6" y="0" width="2.8" height="3" transform="rotate(0 6 6)" fill="#bdbdbd"/><rect x="4.6" y="0" width="2.8" height="3" transform="rotate(45 6 6)" fill="#bdbdbd"/><rect x="4.6" y="0" width="2.8" height="3" transform="rotate(90 6 6)" fill="#bdbdbd"/><rect x="4.6" y="0" width="2.8" height="3" transform="rotate(135 6 6)" fill="#bdbdbd"/><rect x="4.6" y="0" width="2.8" height="3" transform="rotate(180 6 6)" fill="#bdbdbd"/><rect x="4.6" y="0" width="2.8" height="3" transform="rotate(225 6 6)" fill="#bdbdbd"/><rect x="4.6" y="0" width="2.8" height="3" transform="rotate(270 6 6)" fill="#bdbdbd"/><rect x="4.6" y="0" width="2.8" height="3" transform="rotate(315 6 6)" fill="#bdbdbd"/><circle cx="6" cy="6" r="4.2" fill="#bdbdbd"/><circle cx="6" cy="6" r="1.7" fill="#3c3c3c"/></svg>
<div class="a" style="left:42px;top:217px;width:255px;height:20px;background:#3b3b3b;border:1px solid #2a2a2a;border-radius:3px;"></div>
<svg class="a" style="left:49px;top:224px;" width="7" height="5" viewBox="0 0 7 5"><path d="M0.8 0.8l2.7 2.7 2.7-2.7" stroke="#e0e0e0" stroke-width="1" fill="none"/></svg>
<div class="a" style="left:42px;top:263px;width:33px;height:19px;background:#404040;border:1px solid #343434;border-radius:2px;"></div>
<div class="t" style="left:46.8px;top:267.69px;font-size:11px;color:#f0f0f0;font-weight:normal;font-family:'Liberation Sans',sans-serif;letter-spacing:0.368px;">Find</div>
<div class="a" style="left:79px;top:263px;width:51px;height:19px;background:#404040;border:1px solid #343434;border-radius:2px;"></div>
<div class="t" style="left:83.6px;top:267.69px;font-size:11px;color:#9a9a9a;font-weight:normal;font-family:'Liberation Sans',sans-serif;letter-spacing:0.157px;">Replace</div>
<div class="a" style="left:134px;top:263px;width:66px;height:19px;background:#404040;border:1px solid #343434;border-radius:2px;"></div>
<div class="t" style="left:138.6px;top:267.69px;font-size:11px;color:#9a9a9a;font-weight:normal;font-family:'Liberation Sans',sans-serif;letter-spacing:0.218px;">Replace all</div>
<div class="a" style="left:42px;top:286px;width:255px;height:725px;background:#333333;border:1px solid #2c2c2c;border-top-color:#262626;"></div>
<div class="t" style="left:44px;top:290.69px;font-size:11px;color:#9c9c9c;font-weight:normal;font-family:'Liberation Sans',sans-serif;letter-spacing:0.574px;">&lt;No results found&gt;</div>
<div class="a" style="left:38px;top:1011px;width:263px;height:3px;background:#3e3e3e;"></div>
<div class="a" style="left:302px;top:106px;width:1330px;height:24px;background:#262626;"></div>
<div class="a" style="left:303px;top:107px;width:1329px;height:23px;background:#404040;border-left:1px solid #2e2e2e;"></div>
<div class="t" style="left:312.3px;top:113.99px;font-size:11px;color:#eeeeee;font-weight:normal;font-family:'Liberation Sans',sans-serif;letter-spacing:0.040px;">&lt;Untitled&gt; (72.7%)</div>
<svg class="a" style="left:1615px;top:114px;" width="9" height="9" viewBox="0 0 9 9"><path d="M0.7 0.7l7.6 7.6M8.3 0.7L0.7 8.3" stroke="#f0f0f0" stroke-width="1.5"/></svg>
<div class="a" style="left:302px;top:130px;width:1330px;height:884px;background:#3e3e3e;"></div>
<div class="a" style="left:302px;top:130px;width:1px;height:884px;background:#2a2a2a;"></div>
<div class="a" style="left:303px;top:129px;width:1329px;height:1px;background:#2c2c2c;"></div>
<div class="a" style="left:323px;top:150px;width:1291px;height:847px;background:#212121;"></div>
<div class="t" style="left:305.5px;top:134.51px;font-size:9.2px;color:#b8b8b8;font-weight:normal;font-family:'Liberation Sans',sans-serif;letter-spacing:0.172px;">mm</div>
<svg class="a" style="left:0px;top:0px;" width="1920" height="1080" viewBox="0 0 1920 1080"><g fill="#d4d4d4"><rect x="325" y="148" width="1" height="3"/><rect x="330" y="146" width="1" height="5"/><rect x="335" y="148" width="1" height="3"/><rect x="341" y="146" width="1" height="5"/><rect x="346" y="148" width="1" height="3"/><rect x="351" y="146" width="1" height="5"/><rect x="356" y="148" width="1" height="3"/><rect x="362" y="142" width="1" height="9"/><rect x="367" y="148" width="1" height="3"/><rect x="372" y="146" width="1" height="5"/><rect x="378" y="148" width="1" height="3"/><rect x="383" y="146" width="1" height="5"/><rect x="388" y="148" width="1" height="3"/><rect x="394" y="146" width="1" height="5"/><rect x="399" y="148" width="1" height="3"/><rect x="404" y="146" width="1" height="5"/><rect x="409" y="148" width="1" height="3"/><rect x="415" y="142" width="1" height="9"/><rect x="420" y="148" width="1" height="3"/><rect x="425" y="146" width="1" height="5"/><rect x="431" y="148" width="1" height="3"/><rect x="436" y="146" width="1" height="5"/><rect x="441" y="148" width="1" height="3"/><rect x="447" y="146" width="1" height="5"/><rect x="452" y="148" width="1" height="3"/><rect x="457" y="146" width="1" height="5"/><rect x="462" y="148" width="1" height="3"/><rect x="468" y="142" width="1" height="9"/><rect x="473" y="148" width="1" height="3"/><rect x="478" y="146" width="1" height="5"/><rect x="484" y="148" width="1" height="3"/><rect x="489" y="146" width="1" height="5"/><rect x="494" y="148" width="1" height="3"/><rect x="500" y="146" width="1" height="5"/><rect x="505" y="148" width="1" height="3"/><rect x="510" y="146" width="1" height="5"/><rect x="515" y="148" width="1" height="3"/><rect x="521" y="142" width="1" height="9"/><rect x="526" y="148" width="1" height="3"/><rect x="531" y="146" width="1" height="5"/><rect x="537" y="148" width="1" height="3"/><rect x="542" y="146" width="1" height="5"/><rect x="547" y="148" width="1" height="3"/><rect x="553" y="146" width="1" height="5"/><rect x="558" y="148" width="1" height="3"/><rect x="563" y="146" width="1" height="5"/><rect x="568" y="148" width="1" height="3"/><rect x="574" y="142" width="1" height="9"/><rect x="579" y="148" width="1" height="3"/><rect x="584" y="146" width="1" height="5"/><rect x="590" y="148" width="1" height="3"/><rect x="595" y="146" width="1" height="5"/><rect x="600" y="148" width="1" height="3"/><rect x="606" y="146" width="1" height="5"/><rect x="611" y="148" width="1" height="3"/><rect x="616" y="146" width="1" height="5"/><rect x="621" y="148" width="1" height="3"/><rect x="627" y="142" width="1" height="9"/><rect x="632" y="148" width="1" height="3"/><rect x="637" y="146" width="1" height="5"/><rect x="643" y="148" width="1" height="3"/><rect x="648" y="146" width="1" height="5"/><rect x="653" y="148" width="1" height="3"/><rect x="659" y="146" width="1" height="5"/><rect x="664" y="148" width="1" height="3"/><rect x="669" y="146" width="1" height="5"/><rect x="674" y="148" width="1" height="3"/><rect x="680" y="142" width="1" height="9"/><rect x="685" y="148" width="1" height="3"/><rect x="690" y="146" width="1" height="5"/><rect x="696" y="148" width="1" height="3"/><rect x="701" y="146" width="1" height="5"/><rect x="706" y="148" width="1" height="3"/><rect x="712" y="146" width="1" height="5"/><rect x="717" y="148" width="1" height="3"/><rect x="722" y="146" width="1" height="5"/><rect x="727" y="148" width="1" height="3"/><rect x="733" y="142" width="1" height="9"/><rect x="738" y="148" width="1" height="3"/><rect x="743" y="146" width="1" height="5"/><rect x="749" y="148" width="1" height="3"/><rect x="754" y="146" width="1" height="5"/><rect x="759" y="148" width="1" height="3"/><rect x="765" y="146" width="1" height="5"/><rect x="770" y="148" width="1" height="3"/><rect x="775" y="146" width="1" height="5"/><rect x="780" y="148" width="1" height="3"/><rect x="786" y="142" width="1" height="9"/><rect x="791" y="148" width="1" height="3"/><rect x="796" y="146" width="1" height="5"/><rect x="802" y="148" width="1" height="3"/><rect x="807" y="146" width="1" height="5"/><rect x="812" y="148" width="1" height="3"/><rect x="818" y="146" width="1" height="5"/><rect x="823" y="148" width="1" height="3"/><rect x="828" y="146" width="1" height="5"/><rect x="833" y="148" width="1" height="3"/><rect x="839" y="142" width="1" height="9"/><rect x="844" y="148" width="1" height="3"/><rect x="849" y="146" width="1" height="5"/><rect x="855" y="148" width="1" height="3"/><rect x="860" y="146" width="1" height="5"/><rect x="865" y="148" width="1" height="3"/><rect x="871" y="146" width="1" height="5"/><rect x="876" y="148" width="1" height="3"/><rect x="881" y="146" width="1" height="5"/><rect x="886" y="148" width="1" height="3"/><rect x="892" y="142" width="1" height="9"/><rect x="897" y="148" width="1" height="3"/><rect x="902" y="146" width="1" height="5"/><rect x="908" y="148" width="1" height="3"/><rect x="913" y="146" width="1" height="5"/><rect x="918" y="148" width="1" height="3"/><rect x="924" y="146" width="1" height="5"/><rect x="929" y="148" width="1" height="3"/><rect x="934" y="146" width="1" height="5"/><rect x="939" y="148" width="1" height="3"/><rect x="945" y="142" width="1" height="9"/><rect x="950" y="148" width="1" height="3"/><rect x="955" y="146" width="1" height="5"/><rect x="961" y="148" width="1" height="3"/><rect x="966" y="146" width="1" height="5"/><rect x="971" y="148" width="1" height="3"/><rect x="977" y="146" width="1" height="5"/><rect x="982" y="148" width="1" height="3"/><rect x="987" y="146" width="1" height="5"/><rect x="992" y="148" width="1" height="3"/><rect x="998" y="142" width="1" height="9"/><rect x="1003" y="148" width="1" height="3"/><rect x="1008" y="146" width="1" height="5"/><rect x="1014" y="148" width="1" height="3"/><rect x="1019" y="146" width="1" height="5"/><rect x="1024" y="148" width="1" height="3"/><rect x="1030" y="146" width="1" height="5"/><rect x="1035" y="148" width="1" height="3"/><rect x="1040" y="146" width="1" height="5"/><rect x="1045" y="148" width="1" height="3"/><rect x="1051" y="142" width="1" height="9"/><rect x="1056" y="148" width="1" height="3"/><rect x="1061" y="146" width="1" height="5"/><rect x="1067" y="148" width="1" height="3"/><rect x="1072" y="146" width="1" height="5"/><rect x="1077" y="148" width="1" height="3"/><rect x="1083" y="146" width="1" height="5"/><rect x="1088" y="148" width="1" height="3"/><rect x="1093" y="146" width="1" height="5"/><rect x="1098" y="148" width="1" height="3"/><rect x="1104" y="142" width="1" height="9"/><rect x="1109" y="148" width="1" height="3"/><rect x="1114" y="146" width="1" height="5"/><rect x="1120" y="148" width="1" height="3"/><rect x="1125" y="146" width="1" height="5"/><rect x="1130" y="148" width="1" height="3"/><rect x="1136" y="146" width="1" height="5"/><rect x="1141" y="148" width="1" height="3"/><rect x="1146" y="146" width="1" height="5"/><rect x="1151" y="148" width="1" height="3"/><rect x="1157" y="142" width="1" height="9"/><rect x="1162" y="148" width="1" height="3"/><rect x="1167" y="146" width="1" height="5"/><rect x="1173" y="148" width="1" height="3"/><rect x="1178" y="146" width="1" height="5"/><rect x="1183" y="148" width="1" height="3"/><rect x="1189" y="146" width="1" height="5"/><rect x="1194" y="148" width="1" height="3"/><rect x="1199" y="146" width="1" height="5"/><rect x="1204" y="148" width="1" height="3"/><rect x="1210" y="142" width="1" height="9"/><rect x="1215" y="148" width="1" height="3"/><rect x="1220" y="146" width="1" height="5"/><rect x="1226" y="148" width="1" height="3"/><rect x="1231" y="146" width="1" height="5"/><rect x="1236" y="148" width="1" height="3"/><rect x="1242" y="146" width="1" height="5"/><rect x="1247" y="148" width="1" height="3"/><rect x="1252" y="146" width="1" height="5"/><rect x="1257" y="148" width="1" height="3"/><rect x="1263" y="142" width="1" height="9"/><rect x="1268" y="148" width="1" height="3"/><rect x="1273" y="146" width="1" height="5"/><rect x="1279" y="148" width="1" height="3"/><rect x="1284" y="146" width="1" height="5"/><rect x="1289" y="148" width="1" height="3"/><rect x="1295" y="146" width="1" height="5"/><rect x="1300" y="148" width="1" height="3"/><rect x="1305" y="146" width="1" height="5"/><rect x="1310" y="148" width="1" height="3"/><rect x="1316" y="142" width="1" height="9"/><rect x="1321" y="148" width="1" height="3"/><rect x="1326" y="146" width="1" height="5"/><rect x="1332" y="148" width="1" height="3"/><rect x="1337" y="146" width="1" height="5"/><rect x="1342" y="148" width="1" height="3"/><rect x="1348" y="146" width="1" height="5"/><rect x="1353" y="148" width="1" height="3"/><rect x="1358" y="146" width="1" height="5"/><rect x="1363" y="148" width="1" height="3"/><rect x="1369" y="142" width="1" height="9"/><rect x="1374" y="148" width="1" height="3"/><rect x="1379" y="146" width="1" height="5"/><rect x="1385" y="148" width="1" height="3"/><rect x="1390" y="146" width="1" height="5"/><rect x="1395" y="148" width="1" height="3"/><rect x="1401" y="146" width="1" height="5"/><rect x="1406" y="148" width="1" height="3"/><rect x="1411" y="146" width="1" height="5"/><rect x="1416" y="148" width="1" height="3"/><rect x="1422" y="142" width="1" height="9"/><rect x="1427" y="148" width="1" height="3"/><rect x="1432" y="146" width="1" height="5"/><rect x="1438" y="148" width="1" height="3"/><rect x="1443" y="146" width="1" height="5"/><rect x="1448" y="148" width="1" height="3"/><rect x="1454" y="146" width="1" height="5"/><rect x="1459" y="148" width="1" height="3"/><rect x="1464" y="146" width="1" height="5"/><rect x="1469" y="148" width="1" height="3"/><rect x="1475" y="142" width="1" height="9"/><rect x="1480" y="148" width="1" height="3"/><rect x="1485" y="146" width="1" height="5"/><rect x="1491" y="148" width="1" height="3"/><rect x="1496" y="146" width="1" height="5"/><rect x="1501" y="148" width="1" height="3"/><rect x="1507" y="146" width="1" height="5"/><rect x="1512" y="148" width="1" height="3"/><rect x="1517" y="146" width="1" height="5"/><rect x="1522" y="148" width="1" height="3"/><rect x="1528" y="142" width="1" height="9"/><rect x="1533" y="148" width="1" height="3"/><rect x="1538" y="146" width="1" height="5"/><rect x="1544" y="148" width="1" height="3"/><rect x="1549" y="146" width="1" height="5"/><rect x="1554" y="148" width="1" height="3"/><rect x="1560" y="146" width="1" height="5"/><rect x="1565" y="148" width="1" height="3"/><rect x="1570" y="146" width="1" height="5"/><rect x="1575" y="148" width="1" height="3"/><rect x="1581" y="142" width="1" height="9"/><rect x="1586" y="148" width="1" height="3"/><rect x="1591" y="146" width="1" height="5"/><rect x="1597" y="148" width="1" height="3"/><rect x="1602" y="146" width="1" height="5"/><rect x="1607" y="148" width="1" height="3"/><rect x="321" y="154" width="3" height="1"/><rect x="319" y="159" width="5" height="1"/><rect x="321" y="165" width="3" height="1"/><rect x="315" y="170" width="9" height="1"/><rect x="321" y="175" width="3" height="1"/><rect x="319" y="180" width="5" height="1"/><rect x="321" y="186" width="3" height="1"/><rect x="319" y="191" width="5" height="1"/><rect x="321" y="196" width="3" height="1"/><rect x="319" y="202" width="5" height="1"/><rect x="321" y="207" width="3" height="1"/><rect x="319" y="212" width="5" height="1"/><rect x="321" y="217" width="3" height="1"/><rect x="315" y="223" width="9" height="1"/><rect x="321" y="228" width="3" height="1"/><rect x="319" y="233" width="5" height="1"/><rect x="321" y="239" width="3" height="1"/><rect x="319" y="244" width="5" height="1"/><rect x="321" y="249" width="3" height="1"/><rect x="319" y="254" width="5" height="1"/><rect x="321" y="260" width="3" height="1"/><rect x="319" y="265" width="5" height="1"/><rect x="321" y="270" width="3" height="1"/><rect x="315" y="276" width="9" height="1"/><rect x="321" y="281" width="3" height="1"/><rect x="319" y="286" width="5" height="1"/><rect x="321" y="292" width="3" height="1"/><rect x="319" y="297" width="5" height="1"/><rect x="321" y="302" width="3" height="1"/><rect x="319" y="307" width="5" height="1"/><rect x="321" y="313" width="3" height="1"/><rect x="319" y="318" width="5" height="1"/><rect x="321" y="323" width="3" height="1"/><rect x="315" y="329" width="9" height="1"/><rect x="321" y="334" width="3" height="1"/><rect x="319" y="339" width="5" height="1"/><rect x="321" y="344" width="3" height="1"/><rect x="319" y="350" width="5" height="1"/><rect x="321" y="355" width="3" height="1"/><rect x="319" y="360" width="5" height="1"/><rect x="321" y="366" width="3" height="1"/><rect x="319" y="371" width="5" height="1"/><rect x="321" y="376" width="3" height="1"/><rect x="315" y="382" width="9" height="1"/><rect x="321" y="387" width="3" height="1"/><rect x="319" y="392" width="5" height="1"/><rect x="321" y="397" width="3" height="1"/><rect x="319" y="403" width="5" height="1"/><rect x="321" y="408" width="3" height="1"/><rect x="319" y="413" width="5" height="1"/><rect x="321" y="419" width="3" height="1"/><rect x="319" y="424" width="5" height="1"/><rect x="321" y="429" width="3" height="1"/><rect x="315" y="434" width="9" height="1"/><rect x="321" y="440" width="3" height="1"/><rect x="319" y="445" width="5" height="1"/><rect x="321" y="450" width="3" height="1"/><rect x="319" y="456" width="5" height="1"/><rect x="321" y="461" width="3" height="1"/><rect x="319" y="466" width="5" height="1"/><rect x="321" y="472" width="3" height="1"/><rect x="319" y="477" width="5" height="1"/><rect x="321" y="482" width="3" height="1"/><rect x="315" y="487" width="9" height="1"/><rect x="321" y="493" width="3" height="1"/><rect x="319" y="498" width="5" height="1"/><rect x="321" y="503" width="3" height="1"/><rect x="319" y="509" width="5" height="1"/><rect x="321" y="514" width="3" height="1"/><rect x="319" y="519" width="5" height="1"/><rect x="321" y="524" width="3" height="1"/><rect x="319" y="530" width="5" height="1"/><rect x="321" y="535" width="3" height="1"/><rect x="315" y="540" width="9" height="1"/><rect x="321" y="546" width="3" height="1"/><rect x="319" y="551" width="5" height="1"/><rect x="321" y="556" width="3" height="1"/><rect x="319" y="562" width="5" height="1"/><rect x="321" y="567" width="3" height="1"/><rect x="319" y="572" width="5" height="1"/><rect x="321" y="577" width="3" height="1"/><rect x="319" y="583" width="5" height="1"/><rect x="321" y="588" width="3" height="1"/><rect x="315" y="593" width="9" height="1"/><rect x="321" y="599" width="3" height="1"/><rect x="319" y="604" width="5" height="1"/><rect x="321" y="609" width="3" height="1"/><rect x="319" y="614" width="5" height="1"/><rect x="321" y="620" width="3" height="1"/><rect x="319" y="625" width="5" height="1"/><rect x="321" y="630" width="3" height="1"/><rect x="319" y="636" width="5" height="1"/><rect x="321" y="641" width="3" height="1"/><rect x="315" y="646" width="9" height="1"/><rect x="321" y="651" width="3" height="1"/><rect x="319" y="657" width="5" height="1"/><rect x="321" y="662" width="3" height="1"/><rect x="319" y="667" width="5" height="1"/><rect x="321" y="673" width="3" height="1"/><rect x="319" y="678" width="5" height="1"/><rect x="321" y="683" width="3" height="1"/><rect x="319" y="689" width="5" height="1"/><rect x="321" y="694" width="3" height="1"/><rect x="315" y="699" width="9" height="1"/><rect x="321" y="704" width="3" height="1"/><rect x="319" y="710" width="5" height="1"/><rect x="321" y="715" width="3" height="1"/><rect x="319" y="720" width="5" height="1"/><rect x="321" y="726" width="3" height="1"/><rect x="319" y="731" width="5" height="1"/><rect x="321" y="736" width="3" height="1"/><rect x="319" y="741" width="5" height="1"/><rect x="321" y="747" width="3" height="1"/><rect x="315" y="752" width="9" height="1"/><rect x="321" y="757" width="3" height="1"/><rect x="319" y="763" width="5" height="1"/><rect x="321" y="768" width="3" height="1"/><rect x="319" y="773" width="5" height="1"/><rect x="321" y="779" width="3" height="1"/><rect x="319" y="784" width="5" height="1"/><rect x="321" y="789" width="3" height="1"/><rect x="319" y="794" width="5" height="1"/><rect x="321" y="800" width="3" height="1"/><rect x="315" y="805" width="9" height="1"/><rect x="321" y="810" width="3" height="1"/><rect x="319" y="816" width="5" height="1"/><rect x="321" y="821" width="3" height="1"/><rect x="319" y="826" width="5" height="1"/><rect x="321" y="831" width="3" height="1"/><rect x="319" y="837" width="5" height="1"/><rect x="321" y="842" width="3" height="1"/><rect x="319" y="847" width="5" height="1"/><rect x="321" y="853" width="3" height="1"/><rect x="315" y="858" width="9" height="1"/><rect x="321" y="863" width="3" height="1"/><rect x="319" y="869" width="5" height="1"/><rect x="321" y="874" width="3" height="1"/><rect x="319" y="879" width="5" height="1"/><rect x="321" y="884" width="3" height="1"/><rect x="319" y="890" width="5" height="1"/><rect x="321" y="895" width="3" height="1"/><rect x="319" y="900" width="5" height="1"/><rect x="321" y="906" width="3" height="1"/><rect x="315" y="911" width="9" height="1"/><rect x="321" y="916" width="3" height="1"/><rect x="319" y="921" width="5" height="1"/><rect x="321" y="927" width="3" height="1"/><rect x="319" y="932" width="5" height="1"/><rect x="321" y="937" width="3" height="1"/><rect x="319" y="943" width="5" height="1"/><rect x="321" y="948" width="3" height="1"/><rect x="319" y="953" width="5" height="1"/><rect x="321" y="959" width="3" height="1"/><rect x="315" y="964" width="9" height="1"/><rect x="321" y="969" width="3" height="1"/><rect x="319" y="974" width="5" height="1"/><rect x="321" y="980" width="3" height="1"/><rect x="319" y="985" width="5" height="1"/><rect x="321" y="990" width="3" height="1"/><rect x="319" y="996" width="5" height="1"/><rect x="303" y="185" width="21" height="1"/></g></svg>
<div class="t" style="left:332.5px;width:60px;text-align:center;top:132.11px;font-size:9.2px;color:#b8b8b8">-120</div>
<div class="t" style="left:385.5px;width:60px;text-align:center;top:132.11px;font-size:9.2px;color:#b8b8b8">-100</div>
<div class="t" style="left:438.5px;width:60px;text-align:center;top:132.11px;font-size:9.2px;color:#b8b8b8">-80</div>
<div class="t" style="left:491.5px;width:60px;text-align:center;top:132.11px;font-size:9.2px;color:#b8b8b8">-60</div>
<div class="t" style="left:544.5px;width:60px;text-align:center;top:132.11px;font-size:9.2px;color:#b8b8b8">-40</div>
<div class="t" style="left:597.5px;width:60px;text-align:center;top:132.11px;font-size:9.2px;color:#b8b8b8">-20</div>
<div class="t" style="left:650.5px;width:60px;text-align:center;top:132.11px;font-size:9.2px;color:#b8b8b8">0</div>
<div class="t" style="left:703.5px;width:60px;text-align:center;top:132.11px;font-size:9.2px;color:#b8b8b8">20</div>
<div class="t" style="left:756.5px;width:60px;text-align:center;top:132.11px;font-size:9.2px;color:#b8b8b8">40</div>
<div class="t" style="left:809.5px;width:60px;text-align:center;top:132.11px;font-size:9.2px;color:#b8b8b8">60</div>
<div class="t" style="left:862.5px;width:60px;text-align:center;top:132.11px;font-size:9.2px;color:#b8b8b8">80</div>
<div class="t" style="left:915.5px;width:60px;text-align:center;top:132.11px;font-size:9.2px;color:#b8b8b8">100</div>
<div class="t" style="left:968.5px;width:60px;text-align:center;top:132.11px;font-size:9.2px;color:#b8b8b8">120</div>
<div class="t" style="left:1021.5px;width:60px;text-align:center;top:132.11px;font-size:9.2px;color:#b8b8b8">140</div>
<div class="t" style="left:1074.5px;width:60px;text-align:center;top:132.11px;font-size:9.2px;color:#b8b8b8">160</div>
<div class="t" style="left:1127.5px;width:60px;text-align:center;top:132.11px;font-size:9.2px;color:#b8b8b8">180</div>
<div class="t" style="left:1180.5px;width:60px;text-align:center;top:132.11px;font-size:9.2px;color:#b8b8b8">200</div>
<div class="t" style="left:1233.5px;width:60px;text-align:center;top:132.11px;font-size:9.2px;color:#b8b8b8">220</div>
<div class="t" style="left:1286.5px;width:60px;text-align:center;top:132.11px;font-size:9.2px;color:#b8b8b8">240</div>
<div class="t" style="left:1339.5px;width:60px;text-align:center;top:132.11px;font-size:9.2px;color:#b8b8b8">260</div>
<div class="t" style="left:1392.5px;width:60px;text-align:center;top:132.11px;font-size:9.2px;color:#b8b8b8">280</div>
<div class="t" style="left:1445.5px;width:60px;text-align:center;top:132.11px;font-size:9.2px;color:#b8b8b8">300</div>
<div class="t" style="left:1498.5px;width:60px;text-align:center;top:132.11px;font-size:9.2px;color:#b8b8b8">320</div>
<div class="t" style="left:1551.5px;width:60px;text-align:center;top:132.11px;font-size:9.2px;color:#b8b8b8">340</div>
<div class="t" style="left:279px;top:165.5px;width:60px;height:10px;text-align:center;font-size:9.5px;line-height:10px;color:#b8b8b8;transform:rotate(-90deg)">0</div>
<div class="t" style="left:279px;top:218.5px;width:60px;height:10px;text-align:center;font-size:9.5px;line-height:10px;color:#b8b8b8;transform:rotate(-90deg)">20</div>
<div class="t" style="left:279px;top:271.5px;width:60px;height:10px;text-align:center;font-size:9.5px;line-height:10px;color:#b8b8b8;transform:rotate(-90deg)">40</div>
<div class="t" style="left:279px;top:324.5px;width:60px;height:10px;text-align:center;font-size:9.5px;line-height:10px;color:#b8b8b8;transform:rotate(-90deg)">60</div>
<div class="t" style="left:279px;top:377.5px;width:60px;height:10px;text-align:center;font-size:9.5px;line-height:10px;color:#b8b8b8;transform:rotate(-90deg)">80</div>
<div class="t" style="left:279px;top:429.5px;width:60px;height:10px;text-align:center;font-size:9.5px;line-height:10px;color:#b8b8b8;transform:rotate(-90deg)">100</div>
<div class="t" style="left:279px;top:482.5px;width:60px;height:10px;text-align:center;font-size:9.5px;line-height:10px;color:#b8b8b8;transform:rotate(-90deg)">120</div>
<div class="t" style="left:279px;top:535.5px;width:60px;height:10px;text-align:center;font-size:9.5px;line-height:10px;color:#b8b8b8;transform:rotate(-90deg)">140</div>
<div class="t" style="left:279px;top:588.5px;width:60px;height:10px;text-align:center;font-size:9.5px;line-height:10px;color:#b8b8b8;transform:rotate(-90deg)">160</div>
<div class="t" style="left:279px;top:641.5px;width:60px;height:10px;text-align:center;font-size:9.5px;line-height:10px;color:#b8b8b8;transform:rotate(-90deg)">180</div>
<div class="t" style="left:279px;top:694.5px;width:60px;height:10px;text-align:center;font-size:9.5px;line-height:10px;color:#b8b8b8;transform:rotate(-90deg)">200</div>
<div class="t" style="left:279px;top:747.5px;width:60px;height:10px;text-align:center;font-size:9.5px;line-height:10px;color:#b8b8b8;transform:rotate(-90deg)">220</div>
<div class="t" style="left:279px;top:800.5px;width:60px;height:10px;text-align:center;font-size:9.5px;line-height:10px;color:#b8b8b8;transform:rotate(-90deg)">240</div>
<div class="t" style="left:279px;top:853.5px;width:60px;height:10px;text-align:center;font-size:9.5px;line-height:10px;color:#b8b8b8;transform:rotate(-90deg)">260</div>
<div class="t" style="left:279px;top:906.5px;width:60px;height:10px;text-align:center;font-size:9.5px;line-height:10px;color:#b8b8b8;transform:rotate(-90deg)">280</div>
<div class="t" style="left:279px;top:959.5px;width:60px;height:10px;text-align:center;font-size:9.5px;line-height:10px;color:#b8b8b8;transform:rotate(-90deg)">300</div>
<div class="a" style="left:1426px;top:130px;width:1px;height:21px;background:#d4d4d4;"></div>
<div class="a" style="left:679px;top:169px;width:558px;height:789px;background:rgba(0,0,0,0.55);"></div>
<div class="a" style="left:680px;top:170px;width:556px;height:787px;background:#ffffff;"></div>
<div class="a" style="left:746px;top:236px;width:425px;height:642px;border:1px solid #4aa0e6;"></div>
<svg class="a" style="left:1620px;top:135px;" width="8" height="7" viewBox="0 0 8 7"><path d="M4 0L8 7H0z" fill="#8a8a8a"/></svg>
<div class="a" style="left:1620px;top:442px;width:7px;height:244px;background:#8c8c8c;border-radius:4px;"></div>
<svg class="a" style="left:1620px;top:985px;" width="8" height="7" viewBox="0 0 8 7"><path d="M0 0h8L4 7z" fill="#8a8a8a"/></svg>
<svg class="a" style="left:309px;top:1002px;" width="7" height="8" viewBox="0 0 7 8"><path d="M7 0v8L0 4z" fill="#8a8a8a"/></svg>
<div class="a" style="left:741px;top:1003px;width:436px;height:7px;background:#8c8c8c;border-radius:4px;"></div>
<svg class="a" style="left:1602px;top:1002px;" width="7" height="8" viewBox="0 0 7 8"><path d="M0 0v8l7-4z" fill="#8a8a8a"/></svg>
<div class="a" style="left:1632px;top:106px;width:2px;height:908px;background:#2a2a2a;"></div>
<div class="a" style="left:1634px;top:106px;width:286px;height:908px;background:#333333;"></div>
<div class="a" style="left:1634px;top:106px;width:286px;height:24px;background:#262626;"></div>
<div class="a" style="left:1750px;top:108px;width:41px;height:22px;background:#3c3c3c;"></div>
<div class="a" style="left:1641px;top:114px;width:1px;height:8px;background:#6e6e6e;"></div>
<div class="a" style="left:1644px;top:114px;width:1px;height:8px;background:#6e6e6e;"></div>
<div class="t" style="left:1656.3px;top:112.69px;font-size:11px;color:#c9c9c9;font-weight:normal;font-family:'Liberation Sans',sans-serif;letter-spacing:0.140px;">Colour</div>
<div class="t" style="left:1698.5px;top:112.69px;font-size:11px;color:#c9c9c9;font-weight:normal;font-family:'Liberation Sans',sans-serif;letter-spacing:-0.398px;">Swatches</div>
<div class="t" style="left:1753.5px;top:112.69px;font-size:11px;color:#f2f2f2;font-weight:normal;font-family:'Liberation Sans',sans-serif;letter-spacing:-0.118px;">Stroke</div>
<div class="a" style="left:1634px;top:130px;width:286px;height:34px;background:#424242;"></div>
<div class="t" style="left:1647.2px;top:141.69px;font-size:11px;color:#eeeeee;font-weight:normal;font-family:'Liberation Sans',sans-serif;letter-spacing:-0.242px;">Style:</div>
<div class="a" style="left:1686px;top:139px;width:92px;height:19px;background:#383838;border:1px solid #262626;border-radius:3px;"></div>
<div class="a" style="left:1709px;top:140px;width:1px;height:17px;background:#2a2a2a;"></div>
<div class="a" style="left:1732px;top:140px;width:1px;height:17px;background:#2a2a2a;"></div>
<div class="a" style="left:1755px;top:140px;width:1px;height:17px;background:#2a2a2a;"></div>
<div class="a" style="left:1687px;top:140px;width:22px;height:17px;background:#262626;border-radius:2px 0 0 2px;"></div>
<svg class="a" style="left:1690px;top:141px;" width="16" height="16" viewBox="0 0 16 16"><circle cx="8" cy="8" r="6.5" fill="none" stroke="#cfcfcf" stroke-width="1.2"/><path d="M4.5 12L11.5 4" stroke="#e83838" stroke-width="1.5"/></svg>
<svg class="a" style="left:1713px;top:141px;" width="16" height="16" viewBox="0 0 16 16"><path d="M3 13L13 3" stroke="#bdbdbd" stroke-width="1.6" stroke-linecap="round"/></svg>
<svg class="a" style="left:1736px;top:141px;" width="16" height="16" viewBox="0 0 16 16"><path d="M3 13l2-2M7 9l2-2M11 5l2-2" stroke="#bdbdbd" stroke-width="1.4"/></svg>
<svg class="a" style="left:1759px;top:141px;" width="16" height="16" viewBox="0 0 16 16"><path d="M2.5 13.5c1.5-0.5 2.5-2 3.5-3.5l2 2c-1.5 1-3 1.8-5.5 1.5z" fill="#bdbdbd"/><path d="M6.5 9.5L12 3c.6-.7 1.6-.2 1.3.6L9 11z" fill="#bdbdbd"/></svg>
<div class="t" style="left:1647.2px;top:173.69px;font-size:11px;color:#eeeeee;font-weight:normal;font-family:'Liberation Sans',sans-serif;letter-spacing:0.385px;">Width:</div>
<div class="a" style="left:1697px;top:181px;width:144px;height:1px;background:#555555;"></div>
<svg class="a" style="left:1686px;top:174px;" width="12" height="12" viewBox="0 0 12 12"><circle cx="6" cy="6" r="5" fill="#c8c8c8"/><circle cx="6" cy="6" r="1" fill="#5a8ad0"/></svg>
<div class="a" style="left:1845px;top:169px;width:65px;height:20px;background:#2e2e2e;border:1px solid #282828;border-radius:2px;"></div>
<div class="t" style="left:1849.8px;top:173.69px;font-size:11px;color:#eeeeee;font-weight:normal;font-family:'Liberation Sans',sans-serif;letter-spacing:0.618px;">0 pt</div>
<div class="t" style="left:1647.2px;top:195.69px;font-size:11px;color:#eeeeee;font-weight:normal;font-family:'Liberation Sans',sans-serif;letter-spacing:-0.311px;">Cap:</div>
<div class="a" style="left:1686px;top:194px;width:69px;height:18px;background:#383838;border:1px solid #262626;border-radius:3px;"></div>
<div class="a" style="left:1709px;top:195px;width:1px;height:16px;background:#2a2a2a;"></div>
<div class="a" style="left:1732px;top:195px;width:1px;height:16px;background:#2a2a2a;"></div>
<div class="a" style="left:1687px;top:195px;width:22px;height:16px;background:#262626;border-radius:2px 0 0 2px;"></div>
<svg class="a" style="left:1690px;top:196px;" width="16" height="14" viewBox="0 0 16 14"><path d="M2 3.5h5a3.5 3.5 0 0 1 0 7H2" fill="none" stroke="#d8d8d8" stroke-width="1.1"/><path d="M2 7h6" stroke="#4aa8f0" stroke-width="1.1"/><path d="M8 5l2 2-2 2-2-2z" fill="#4aa8f0"/></svg>
<svg class="a" style="left:1713px;top:196px;" width="16" height="14" viewBox="0 0 16 14"><path d="M2 3.5h8v7H2" fill="none" stroke="#d8d8d8" stroke-width="1.1"/><path d="M2 7h7" stroke="#4aa8f0" stroke-width="1.1"/><path d="M10 5l2 2-2 2-2-2z" fill="#4aa8f0"/></svg>
<svg class="a" style="left:1736px;top:196px;" width="16" height="14" viewBox="0 0 16 14"><path d="M2 2.5h11v9H2" fill="none" stroke="#d8d8d8" stroke-width="1.1"/><path d="M2 7h5" stroke="#4aa8f0" stroke-width="1.1"/><path d="M7 5l2 2-2 2-2-2z" fill="#4aa8f0"/></svg>
<div class="t" style="left:1647.2px;top:219.69px;font-size:11px;color:#eeeeee;font-weight:normal;font-family:'Liberation Sans',sans-serif;letter-spacing:-0.109px;">Join:</div>
<div class="a" style="left:1686px;top:218px;width:69px;height:18px;background:#383838;border:1px solid #262626;border-radius:3px;"></div>
<div class="a" style="left:1709px;top:219px;width:1px;height:16px;background:#2a2a2a;"></div>
<div class="a" style="left:1732px;top:219px;width:1px;height:16px;background:#2a2a2a;"></div>
<div class="a" style="left:1687px;top:219px;width:22px;height:16px;background:#262626;border-radius:2px 0 0 2px;"></div>
<svg class="a" style="left:1690px;top:220px;" width="16" height="14" viewBox="0 0 16 14"><path d="M3 2v6a5 5 0 0 0 5 5h6" fill="none" stroke="#d8d8d8" stroke-width="1.1"/><path d="M6 2v5h7M9 4.5h4" fill="none" stroke="#d8d8d8" stroke-width="0.9"/><path d="M6 7.5h6" stroke="#4aa8f0" stroke-width="1.1"/><path d="M6 5.5l2 2-2 2-2-2z" fill="#4aa8f0"/></svg>
<svg class="a" style="left:1713px;top:220px;" width="16" height="14" viewBox="0 0 16 14"><path d="M3 2v7l4 4h7" fill="none" stroke="#d8d8d8" stroke-width="1.1"/><path d="M6 2v5h7M9 4.5h4" fill="none" stroke="#d8d8d8" stroke-width="0.9"/><path d="M6 7.5h6" stroke="#4aa8f0" stroke-width="1.1"/><path d="M6 5.5l2 2-2 2-2-2z" fill="#4aa8f0"/></svg>
<svg class="a" style="left:1736px;top:220px;" width="16" height="14" viewBox="0 0 16 14"><path d="M3 2v11h11" fill="none" stroke="#d8d8d8" stroke-width="1.1"/><path d="M6 2v5h7M9 4.5h4" fill="none" stroke="#d8d8d8" stroke-width="0.9"/><path d="M6 7.5h6" stroke="#4aa8f0" stroke-width="1.1"/><path d="M6 5.5l2 2-2 2-2-2z" fill="#4aa8f0"/></svg>
<div class="t" style="left:1812.8px;top:219.69px;font-size:11px;color:#eeeeee;font-weight:normal;font-family:'Liberation Sans',sans-serif;letter-spacing:0.180px;">Mitre:</div>
<div class="a" style="left:1845px;top:215px;width:65px;height:20px;background:#2e2e2e;border:1px solid #282828;border-radius:2px;"></div>
<div class="t" style="left:1850.8px;top:219.69px;font-size:11px;color:#eeeeee;font-weight:normal;font-family:'Liberation Sans',sans-serif;letter-spacing:-0.445px;">1.5</div>
<div class="t" style="left:1647.2px;top:243.69px;font-size:11px;color:#eeeeee;font-weight:normal;font-family:'Liberation Sans',sans-serif;letter-spacing:0.217px;">Align:</div>
<div class="a" style="left:1686px;top:242px;width:69px;height:18px;background:#383838;border:1px solid #262626;border-radius:3px;"></div>
<div class="a" style="left:1709px;top:243px;width:1px;height:16px;background:#2a2a2a;"></div>
<div class="a" style="left:1732px;top:243px;width:1px;height:16px;background:#2a2a2a;"></div>
<div class="a" style="left:1687px;top:243px;width:22px;height:16px;background:#262626;border-radius:2px 0 0 2px;"></div>
<svg class="a" style="left:1690px;top:244px;" width="16" height="14" viewBox="0 0 16 14"><path d="M2 13V7a5 5 0 0 1 5-5h6M5 13V9a3 3 0 0 1 3-3h5" fill="none" stroke="#d8d8d8" stroke-width="1.1"/><path d="M6 4.5l2 2-2 2-2-2z" fill="#4aa8f0"/></svg>
<svg class="a" style="left:1713px;top:244px;" width="16" height="14" viewBox="0 0 16 14"><path d="M3 13V3h10" fill="none" stroke="#4aa8f0" stroke-width="1.2"/><path d="M8 13v-2a2 2 0 0 1 2-2h3" fill="none" stroke="#d8d8d8" stroke-width="1.1"/><path d="M4 1l2 2-2 2-2-2z" fill="#4aa8f0"/></svg>
<svg class="a" style="left:1736px;top:244px;" width="16" height="14" viewBox="0 0 16 14"><path d="M2 13V8a6 6 0 0 1 6-6h5" fill="none" stroke="#d8d8d8" stroke-width="1.1"/><path d="M7 10h6" stroke="#4aa8f0" stroke-width="1.1"/><path d="M7 8l2 2-2 2-2-2z" fill="#4aa8f0"/></svg>
<div class="a" style="left:1638px;top:273px;width:278px;height:1px;background:#484848;"></div>
<div class="t" style="left:1647.2px;top:291.69px;font-size:11px;color:#eeeeee;font-weight:normal;font-family:'Liberation Sans',sans-serif;letter-spacing:0.086px;">Order:</div>
<div class="a" style="left:1686px;top:289px;width:46px;height:19px;background:#383838;border:1px solid #262626;border-radius:3px;"></div>
<div class="a" style="left:1709px;top:290px;width:1px;height:17px;background:#2a2a2a;"></div>
<div class="a" style="left:1687px;top:290px;width:22px;height:17px;background:#262626;border-radius:2px 0 0 2px;"></div>
<svg class="a" style="left:1690px;top:291px;" width="16" height="16" viewBox="0 0 16 16"><rect x="3" y="3" width="7" height="7" rx="1.5" fill="none" stroke="#4aa8f0" stroke-width="1.5"/><rect x="6" y="6" width="7" height="7" rx="1.5" fill="#b0b0b0"/></svg>
<svg class="a" style="left:1713px;top:291px;" width="16" height="16" viewBox="0 0 16 16"><rect x="6" y="6" width="7" height="7" rx="1.5" fill="#8a8a8a"/><rect x="3" y="3" width="7" height="7" rx="1.5" fill="#2e2e2e" stroke="#4aa8f0" stroke-width="1.5"/><rect x="5" y="5" width="3" height="3" fill="#8a8a8a"/></svg>
<div class="a" style="left:1813px;top:292px;width:10px;height:10px;background:#6a6a6a;border-radius:1px;"></div>
<div class="t" style="left:1827.5px;top:291.69px;font-size:11px;color:#eeeeee;font-weight:normal;font-family:'Liberation Sans',sans-serif;letter-spacing:-0.015px;">Scale with object</div>
<div class="a" style="left:1638px;top:321px;width:278px;height:1px;background:#484848;"></div>
<div class="t" style="left:1647.5px;top:339.69px;font-size:11px;color:#6c6c6c;font-weight:normal;font-family:'Liberation Sans',sans-serif;letter-spacing:-0.137px;">Start:</div>
<div class="t" style="left:1647.5px;top:363.69px;font-size:11px;color:#6c6c6c;font-weight:normal;font-family:'Liberation Sans',sans-serif;letter-spacing:-0.476px;">End:</div>
<div class="a" style="left:1686px;top:337px;width:45px;height:20px;background:#3c3c3c;border:1px solid #2a2a2a;border-radius:3px;"></div>
<svg class="a" style="left:1719px;top:346px;" width="7" height="4" viewBox="0 0 7 4"><path d="M0 0h7L3.5 4z" fill="#9a9a9a"/></svg>
<div class="a" style="left:1735px;top:337px;width:65px;height:20px;background:#333333;border:1px solid #2a2a2a;border-radius:3px;"></div>
<svg class="a" style="left:1789px;top:345px;" width="7" height="4" viewBox="0 0 7 4"><path d="M0 0h7L3.5 4z" fill="#9a9a9a"/></svg>
<div class="a" style="left:1686px;top:361px;width:45px;height:20px;background:#3c3c3c;border:1px solid #2a2a2a;border-radius:3px;"></div>
<svg class="a" style="left:1719px;top:370px;" width="7" height="4" viewBox="0 0 7 4"><path d="M0 0h7L3.5 4z" fill="#9a9a9a"/></svg>
<div class="a" style="left:1735px;top:361px;width:65px;height:20px;background:#333333;border:1px solid #2a2a2a;border-radius:3px;"></div>
<svg class="a" style="left:1789px;top:369px;" width="7" height="4" viewBox="0 0 7 4"><path d="M0 0h7L3.5 4z" fill="#9a9a9a"/></svg>
<svg class="a" style="left:1804px;top:350px;" width="6" height="14" viewBox="0 0 6 14"><ellipse cx="3" cy="3.5" rx="2" ry="3" fill="none" stroke="#666" stroke-width="1"/><ellipse cx="3" cy="10.5" rx="2" ry="3" fill="none" stroke="#666" stroke-width="1"/></svg>
<div class="a" style="left:1863px;top:337px;width:47px;height:20px;background:#2a2a2a;border:1px solid #282828;border-radius:3px;"></div>
<div class="a" style="left:1886px;top:338px;width:23px;height:18px;background:#353535;"></div>
<svg class="a" style="left:1868px;top:341px;" width="14" height="12" viewBox="0 0 14 12"><path d="M1 6h9M7 3l3 3-3 3" stroke="#777" stroke-width="1.3" fill="none"/><path d="M12 1v10" stroke="#4a6a90" stroke-width="0.8" stroke-dasharray="1.5 1"/></svg>
<svg class="a" style="left:1890px;top:341px;" width="14" height="12" viewBox="0 0 14 12"><path d="M1 6h10M8 3l3 3-3 3" stroke="#777" stroke-width="1.3" fill="none"/><path d="M6 1v10" stroke="#4a6a90" stroke-width="0.8" stroke-dasharray="1.5 1"/></svg>
<div class="a" style="left:1891px;top:363px;width:19px;height:18px;background:#343434;border:1px solid #2e2e2e;border-radius:3px;"></div>
<svg class="a" style="left:1894px;top:365px;" width="13" height="13" viewBox="0 0 13 13"><path d="M2.5 6.5a4 4 0 0 1 7-2.7M10.5 6.5a4 4 0 0 1-7 2.7" fill="none" stroke="#7a7a7a" stroke-width="1.2"/><path d="M9.5 1.5v2.5H7M3.5 11.5V9H6" stroke="#7a7a7a" stroke-width="1.1" fill="none"/></svg>
<div class="a" style="left:1638px;top:393px;width:278px;height:1px;background:#484848;"></div>
<div class="a" style="left:1649px;top:406px;width:80px;height:20px;background:#3a3a3a;border:1px solid #2c2c2c;border-radius:3px;"></div>
<div class="t" style="left:1656.7px;top:410.69px;font-size:11px;color:#eeeeee;font-weight:normal;font-family:'Liberation Sans',sans-serif;letter-spacing:0.283px;">Properties...</div>
<div class="t" style="left:1734.8px;top:410.69px;font-size:11px;color:#eeeeee;font-weight:normal;font-family:'Liberation Sans',sans-serif;letter-spacing:-0.409px;">Pressure:</div>
<div class="a" style="left:1783px;top:406px;width:80px;height:20px;background:#3c3c3c;border:1px solid #2c2c2c;border-radius:3px;"></div>
<div class="a" style="left:1785px;top:408px;width:75px;height:1px;background:#8a8a8a;"></div>
<div class="a" style="left:1634px;top:436px;width:286px;height:24px;background:#262626;"></div>
<div class="a" style="left:1752px;top:438px;width:60px;height:22px;background:#3c3c3c;"></div>
<div class="a" style="left:1641px;top:444px;width:1px;height:8px;background:#6e6e6e;"></div>
<div class="a" style="left:1644px;top:444px;width:1px;height:8px;background:#6e6e6e;"></div>
<div class="t" style="left:1656.7px;top:442.69px;font-size:11px;color:#c9c9c9;font-weight:normal;font-family:'Liberation Sans',sans-serif;letter-spacing:-0.543px;">Layers</div>
<div class="t" style="left:1696.7px;top:442.69px;font-size:11px;color:#c9c9c9;font-weight:normal;font-family:'Liberation Sans',sans-serif;letter-spacing:-0.258px;">Paragraph</div>
<div class="t" style="left:1755.7px;top:442.69px;font-size:11px;color:#f2f2f2;font-weight:normal;font-family:'Liberation Sans',sans-serif;letter-spacing:-0.288px;">Text Styles</div>
<div class="t" style="left:1815.2px;top:442.69px;font-size:11px;color:#c9c9c9;font-weight:normal;font-family:'Liberation Sans',sans-serif;letter-spacing:-0.311px;">Styles</div>
<div class="t" style="left:1853.9px;top:442.69px;font-size:11px;color:#c9c9c9;font-weight:normal;font-family:'Liberation Sans',sans-serif;letter-spacing:-0.288px;">Effects</div>
<svg class="a" style="left:1903px;top:443px;" width="13" height="9" viewBox="0 0 13 9"><g fill="#d0d0d0"><rect x="0" y="0" width="9" height="1.2"/><rect x="0" y="2.2" width="9" height="1.2"/><rect x="0" y="4.4" width="9" height="1.2"/><rect x="0" y="6.6" width="9" height="1.2"/><rect x="10.5" y="7" width="2" height="2"/></g></svg>
<div class="a" style="left:1634px;top:460px;width:286px;height:24px;background:#3a3a3a;"></div>
<svg class="a" style="left:1641px;top:467px;" width="6" height="10" viewBox="0 0 6 10"><path d="M0 0l6 5-6 5z" fill="#777"/></svg>
<div class="a" style="left:1658px;top:461px;width:238px;height:22px;background:#4a4a4a;"></div>
<div class="t" style="left:1660px;top:468.94px;font-size:10.7px;color:#ffffff;font-weight:normal;font-family:'Liberation Sans',sans-serif;">...</div>
<svg class="a" style="left:1899px;top:463px;" width="17" height="17" viewBox="0 0 17 17"><circle cx="8.5" cy="8.5" r="7.5" fill="none" stroke="#6a6a6a" stroke-width="1"/><path d="M5 5.5h7v1.5M8.5 5.5v7M7.3 12.5h2.4M5 5.5v1.5" stroke="#777" stroke-width="1" fill="none"/></svg>
<div class="a" style="left:1634px;top:484px;width:269px;height:229px;background:#333333;"></div>
<div class="a" style="left:1634px;top:484px;width:269px;height:29px;background:#333333;"></div>
<div class="a" style="left:1634px;top:513px;width:269px;height:30px;background:#6089c9;"></div>
<div class="a" style="left:1634px;top:543px;width:269px;height:30px;background:#333333;"></div>
<div class="a" style="left:1634px;top:573px;width:269px;height:31px;background:#363636;"></div>
<div class="a" style="left:1634px;top:604px;width:269px;height:30px;background:#2f2f2f;"></div>
<div class="a" style="left:1634px;top:634px;width:269px;height:30px;background:#363636;"></div>
<div class="a" style="left:1634px;top:664px;width:269px;height:29px;background:#303030;"></div>
<div class="a" style="left:1634px;top:693px;width:269px;height:20px;background:#363636;"></div>
<div class="t" style="left:1649.8px;top:489.88px;font-size:15.5px;color:#eeeeee;font-weight:normal;font-family:'Liberation Sans',sans-serif;letter-spacing:0.423px;">Base</div>
<div class="t" style="left:1638px;top:521.84px;font-size:12px;color:#9ab4dc;font-weight:normal;font-family:'Liberation Sans',sans-serif;">¶</div>
<div class="t" style="left:1649.8px;top:521.84px;font-size:12px;color:#f4f4f4;font-weight:normal;font-family:'Liberation Sans',sans-serif;letter-spacing:0.164px;">[No Style]</div>
<div class="t" style="left:1638px;top:550.84px;font-size:12px;color:#c0c0c0;font-weight:normal;font-family:'Liberation Sans',sans-serif;">¶</div>
<div class="t" style="left:1649.8px;top:550.84px;font-size:12px;color:#eeeeee;font-weight:normal;font-family:'Liberation Sans',sans-serif;letter-spacing:0.574px;">Bcdy</div>
<div class="t" style="left:1638px;top:581.84px;font-size:12px;color:#c0c0c0;font-weight:normal;font-family:'Liberation Sans',sans-serif;">¶</div>
<div class="a" style="left:1650px;top:582px;width:16px;height:12px;background:#e8e8e8;"></div>
<div class="t" style="left:1638px;top:612.84px;font-size:12px;color:#c0c0c0;font-weight:normal;font-family:'Liberation Sans',sans-serif;">¶</div>
<div class="a" style="left:1651px;top:617px;width:3px;height:3px;background:#eeeeee;border-radius:50%;"></div>
<div class="t" style="left:1673.7px;top:609.88px;font-size:15.5px;color:#eeeeee;font-weight:normal;font-family:'Liberation Sans',sans-serif;letter-spacing:-0.057px;">Bullet 1</div>
<div class="t" style="left:1638px;top:642.84px;font-size:12px;color:#c0c0c0;font-weight:normal;font-family:'Liberation Sans',sans-serif;">¶</div>
<div class="a" style="left:1675px;top:647px;width:3px;height:3px;background:#eeeeee;"></div>
<div class="t" style="left:1697.1px;top:639.88px;font-size:15.5px;color:#eeeeee;font-weight:normal;font-family:'Liberation Sans',sans-serif;letter-spacing:0.243px;">Bullet 2</div>
<div class="t" style="left:1638px;top:672.84px;font-size:12px;color:#c0c0c0;font-weight:normal;font-family:'Liberation Sans',sans-serif;">¶</div>
<div class="a" style="left:1698px;top:677px;width:3px;height:3px;border:1px solid #ddd;border-radius:50%;"></div>
<div class="t" style="left:1720.5px;top:669.88px;font-size:15.5px;color:#eeeeee;font-weight:normal;font-family:'Liberation Sans',sans-serif;letter-spacing:0.257px;">Bullet 3</div>
<div class="a" style="left:1634px;top:693px;width:269px;height:20px;overflow:hidden">
<div class="t" style="left:4px;top:9.44px;font-size:12px;color:#c0c0c0;font-weight:normal;font-family:'Liberation Sans',sans-serif;">¶</div>
<div class="t" style="left:16.5px;top:7.95px;font-size:14px;color:#eeeeee;font-weight:normal;font-family:'Liberation Sans',sans-serif;">D</div>
<div class="t" style="left:28.5px;top:9.61px;font-size:4px;color:#bbbbbb;font-weight:normal;font-family:'Liberation Sans',sans-serif;">rop Cap</div>
</div>
<svg class="a" style="left:1885px;top:494px;" width="13" height="9" viewBox="0 0 13 9"><g fill="#d0d0d0"><rect x="0" y="0" width="9" height="1.2"/><rect x="0" y="2.2" width="9" height="1.2"/><rect x="0" y="4.4" width="9" height="1.2"/><rect x="0" y="6.6" width="9" height="1.2"/><rect x="10.5" y="7" width="2" height="2"/></g></svg>
<svg class="a" style="left:1885px;top:524px;" width="13" height="9" viewBox="0 0 13 9"><g fill="#d0d0d0"><rect x="0" y="0" width="9" height="1.2"/><rect x="0" y="2.2" width="9" height="1.2"/><rect x="0" y="4.4" width="9" height="1.2"/><rect x="0" y="6.6" width="9" height="1.2"/><rect x="10.5" y="7" width="2" height="2"/></g></svg>
<svg class="a" style="left:1885px;top:554px;" width="13" height="9" viewBox="0 0 13 9"><g fill="#d0d0d0"><rect x="0" y="0" width="9" height="1.2"/><rect x="0" y="2.2" width="9" height="1.2"/><rect x="0" y="4.4" width="9" height="1.2"/><rect x="0" y="6.6" width="9" height="1.2"/><rect x="10.5" y="7" width="2" height="2"/></g></svg>
<svg class="a" style="left:1885px;top:584px;" width="13" height="9" viewBox="0 0 13 9"><g fill="#d0d0d0"><rect x="0" y="0" width="9" height="1.2"/><rect x="0" y="2.2" width="9" height="1.2"/><rect x="0" y="4.4" width="9" height="1.2"/><rect x="0" y="6.6" width="9" height="1.2"/><rect x="10.5" y="7" width="2" height="2"/></g></svg>
<svg class="a" style="left:1885px;top:614px;" width="13" height="9" viewBox="0 0 13 9"><g fill="#d0d0d0"><rect x="0" y="0" width="9" height="1.2"/><rect x="0" y="2.2" width="9" height="1.2"/><rect x="0" y="4.4" width="9" height="1.2"/><rect x="0" y="6.6" width="9" height="1.2"/><rect x="10.5" y="7" width="2" height="2"/></g></svg>
<svg class="a" style="left:1885px;top:644px;" width="13" height="9" viewBox="0 0 13 9"><g fill="#d0d0d0"><rect x="0" y="0" width="9" height="1.2"/><rect x="0" y="2.2" width="9" height="1.2"/><rect x="0" y="4.4" width="9" height="1.2"/><rect x="0" y="6.6" width="9" height="1.2"/><rect x="10.5" y="7" width="2" height="2"/></g></svg>
<svg class="a" style="left:1885px;top:674px;" width="13" height="9" viewBox="0 0 13 9"><g fill="#d0d0d0"><rect x="0" y="0" width="9" height="1.2"/><rect x="0" y="2.2" width="9" height="1.2"/><rect x="0" y="4.4" width="9" height="1.2"/><rect x="0" y="6.6" width="9" height="1.2"/><rect x="10.5" y="7" width="2" height="2"/></g></svg>
<svg class="a" style="left:1885px;top:704px;" width="13" height="9" viewBox="0 0 13 9"><g fill="#d0d0d0"><rect x="0" y="0" width="9" height="1.2"/><rect x="0" y="2.2" width="9" height="1.2"/><rect x="0" y="4.4" width="9" height="1.2"/><rect x="0" y="6.6" width="9" height="1.2"/><rect x="10.5" y="7" width="2" height="2"/></g></svg>
<div class="a" style="left:1903px;top:484px;width:17px;height:229px;background:#333333;"></div>
<svg class="a" style="left:1907px;top:489px;" width="8" height="7" viewBox="0 0 8 7"><path d="M4 0L8 7H0z" fill="#777"/></svg>
<div class="a" style="left:1908px;top:502px;width:7px;height:58px;background:#9a9a9a;border-radius:4px;"></div>
<svg class="a" style="left:1907px;top:701px;" width="8" height="7" viewBox="0 0 8 7"><path d="M0 0h8L4 7z" fill="#777"/></svg>
<div class="a" style="left:1634px;top:713px;width:286px;height:24px;background:#3c3c3c;"></div>
<svg class="a" style="left:1638px;top:719px;" width="6" height="6" viewBox="0 0 6 6"><path d="M3 0v5.5M0.2 2.75h5.6" stroke="#b4b4b4" stroke-width="1.1"/></svg>
<div class="t" style="left:1643px;top:721.69px;font-size:11px;color:#b4b4b4;font-weight:normal;font-family:'Liberation Sans',sans-serif;">¶</div>
<svg class="a" style="left:1658px;top:719px;" width="6" height="6" viewBox="0 0 6 6"><path d="M3 0v5.5M0.2 2.75h5.6" stroke="#b4b4b4" stroke-width="1.1"/></svg>
<div class="t" style="left:1661.5px;top:718.73px;font-size:14.5px;color:#b4b4b4;font-weight:normal;font-family:'Liberation Serif',serif;">a</div>
<svg class="a" style="left:1678px;top:719px;" width="6" height="6" viewBox="0 0 6 6"><path d="M3 0v5.5M0.2 2.75h5.6" stroke="#b4b4b4" stroke-width="1.1"/></svg>
<div class="t" style="left:1681px;top:718.30px;font-size:15px;color:#b4b4b4;font-weight:normal;font-family:'Liberation Serif',serif;"><i>s</i></div>
<svg class="a" style="left:1747px;top:717px;" width="16" height="16" viewBox="0 0 16 16"><path d="M3.2 2.6A7 7 0 1 1 4 13.6" fill="none" stroke="#6a6a6a" stroke-width="0.9" transform="rotate(-20 8 8)"/></svg>
<div class="t" style="left:1750.5px;top:720.61px;font-size:10.5px;color:#9a9a9a;font-weight:normal;font-family:'Liberation Sans',sans-serif;">¶</div>
<svg class="a" style="left:1767px;top:717px;" width="16" height="16" viewBox="0 0 16 16"><path d="M3.2 2.6A7 7 0 1 1 4 13.6" fill="none" stroke="#6a6a6a" stroke-width="0.9" transform="rotate(-20 8 8)"/></svg>
<div class="t" style="left:1770.5px;top:719.34px;font-size:12px;color:#9a9a9a;font-weight:normal;font-family:'Liberation Serif',serif;">a</div>
<svg class="a" style="left:1905px;top:718px;" width="10" height="13" viewBox="0 0 10 13"><path d="M0 2h10M3.5 0.5h3M1.2 3h7.6l-0.6 9.5H1.8z" fill="none" stroke="#6a6a6a" stroke-width="1"/><path d="M3.5 4.5v7M5 4.5v7M6.5 4.5v7" stroke="#6a6a6a" stroke-width="0.8"/></svg>
<div class="a" style="left:1634px;top:737px;width:286px;height:3px;background:#262626;"></div>
<div class="a" style="left:1634px;top:740px;width:286px;height:24px;background:#262626;"></div>
<div class="a" style="left:1754px;top:742px;width:59px;height:22px;background:#3c3c3c;"></div>
<div class="a" style="left:1641px;top:748px;width:1px;height:8px;background:#6e6e6e;"></div>
<div class="a" style="left:1644px;top:748px;width:1px;height:8px;background:#6e6e6e;"></div>
<div class="t" style="left:1656.7px;top:745.69px;font-size:11px;color:#c9c9c9;font-weight:normal;font-family:'Liberation Sans',sans-serif;letter-spacing:-0.163px;">Transform</div>
<div class="t" style="left:1714.4px;top:745.69px;font-size:11px;color:#c9c9c9;font-weight:normal;font-family:'Liberation Sans',sans-serif;letter-spacing:0.146px;">History</div>
<div class="t" style="left:1758.5px;top:745.69px;font-size:11px;color:#f2f2f2;font-weight:normal;font-family:'Liberation Sans',sans-serif;letter-spacing:0.166px;">Navigator</div>
<svg class="a" style="left:1903px;top:747px;" width="13" height="9" viewBox="0 0 13 9"><g fill="#d0d0d0"><rect x="0" y="0" width="9" height="1.2"/><rect x="0" y="2.2" width="9" height="1.2"/><rect x="0" y="4.4" width="9" height="1.2"/><rect x="0" y="6.6" width="9" height="1.2"/><rect x="10.5" y="7" width="2" height="2"/></g></svg>
<div class="a" style="left:1634px;top:764px;width:286px;height:28px;background:#3c3c3c;"></div>
<div class="t" style="left:1643.4px;top:771.69px;font-size:11px;color:#eeeeee;font-weight:normal;font-family:'Liberation Sans',sans-serif;letter-spacing:0.182px;">Zoom:</div>
<svg class="a" style="left:1678px;top:770px;" width="17" height="17" viewBox="0 0 17 17"><circle cx="8.5" cy="8.5" r="7.5" fill="none" stroke="#cfcfcf" stroke-width="1"/><path d="M4.5 8.5h8" stroke="#cfcfcf" stroke-width="1.3"/></svg>
<div class="a" style="left:1701px;top:773px;width:138px;height:5px;background:#2e2e2e;border-radius:3px;"></div>
<div class="a" style="left:1701px;top:773px;width:44px;height:5px;background:#5a8ad6;border-radius:3px 0 0 3px;"></div>
<svg class="a" style="left:1740px;top:771px;" width="10" height="10" viewBox="0 0 10 10"><path d="M0.5 0.5h9v6l-4.5 3-4.5-3z" fill="#d8d8d8"/></svg>
<svg class="a" style="left:1702px;top:782px;" width="140" height="3" viewBox="0 0 140 3"><g fill="#7a7a7a"><rect x="0" y="0" width="1" height="2.5"/><rect x="7" y="0" width="1" height="2.5"/><rect x="23" y="0" width="1" height="2.5"/><rect x="49" y="0" width="1" height="2.5"/><rect x="55" y="0" width="1" height="2.5"/><rect x="77" y="0" width="1" height="2.5"/><rect x="96" y="0" width="1" height="2.5"/><rect x="115" y="0" width="1" height="2.5"/><rect x="119" y="0" width="1" height="2.5"/><rect x="133" y="0" width="1" height="2.5"/></g></svg>
<div class="a" style="left:1841px;top:767px;width:48px;height:20px;background:#2e2e2e;border:1px solid #282828;border-radius:2px;"></div>
<div class="t" style="left:1845.5px;top:771.69px;font-size:11px;color:#eeeeee;font-weight:normal;font-family:'Liberation Sans',sans-serif;letter-spacing:-0.091px;">73 %</div>
<svg class="a" style="left:1893px;top:770px;" width="17" height="17" viewBox="0 0 17 17"><circle cx="8.5" cy="8.5" r="7.5" fill="none" stroke="#cfcfcf" stroke-width="1"/><path d="M4.5 8.5h8M8.5 4.5v8" stroke="#cfcfcf" stroke-width="1.3"/></svg>
<div class="a" style="left:1634px;top:791px;width:286px;height:1px;background:#2e2e2e;"></div>
<div class="a" style="left:1634px;top:792px;width:286px;height:222px;background:#424242;"></div>
<div class="a" style="left:1702px;top:798px;width:150px;height:211px;background:#ffffff;"></div>
<div class="a" style="left:0px;top:1014px;width:1920px;height:26px;background:#333333;"></div>
<svg class="a" style="left:6px;top:1023px;" width="12" height="11" viewBox="0 0 12 11"><rect x="0" y="0" width="1.3" height="10" fill="#8a8a8a"/><path d="M11 0v10L2.5 5z" fill="#8a8a8a"/></svg>
<svg class="a" style="left:26px;top:1023px;" width="9" height="11" viewBox="0 0 9 11"><path d="M8 0v10L0 5z" fill="#8a8a8a"/></svg>
<div class="t" style="left:65px;top:1021.97px;font-size:12.2px;color:#e8e8e8;font-weight:normal;font-family:'Liberation Sans',sans-serif;letter-spacing:-0.744px;">1 of 1</div>
<svg class="a" style="left:124px;top:1023px;" width="9" height="11" viewBox="0 0 9 11"><path d="M0 0v10l8-5z" fill="#f0f0f0"/></svg>
<svg class="a" style="left:141px;top:1023px;" width="11" height="11" viewBox="0 0 11 11"><path d="M0 0v10l8.5-5z" fill="#8a8a8a"/><rect x="9.7" y="0" width="1.3" height="10" fill="#8a8a8a"/></svg>
<svg class="a" style="left:159px;top:1020px;" width="14" height="16" viewBox="0 0 14 16"><path d="M3.5 13.5V14.5H12.5V2.8H11" fill="none" stroke="#a8a8a8" stroke-width="1.1"/><rect x="1.6" y="1.6" width="9" height="11" fill="#2a2a2a" stroke="#f0f0f0" stroke-width="1.3"/><rect x="3.2" y="3.2" width="5.8" height="1.8" fill="#fff"/><path d="M3.2 6.6h5.8M3.2 8.6h5.8M3.2 10.6h5.8" stroke="#dcdcdc" stroke-width="0.9"/></svg>
<svg class="a" style="left:187px;top:1021px;" width="14" height="14" viewBox="0 0 14 14"><defs><linearGradient id="bellg" x1="0" x2="1"><stop offset="0" stop-color="#5fd68a"/><stop offset="0.35" stop-color="#2cc060"/><stop offset="0.6" stop-color="#2e8a52"/><stop offset="1" stop-color="#2a7a4a"/></linearGradient></defs><path d="M2 11V6a4.6 4.6 0 0 1 9.2 0v5z" fill="url(#bellg)"/><path d="M1.2 11h10.8l1.4 2H-.2z" fill="#9a9696"/></svg>
<div class="t" style="left:212.8px;top:1022.67px;font-size:11.5px;color:#f2f2f2;font-weight:bold;font-family:'Liberation Sans',sans-serif;letter-spacing:0.433px;">Drag</div>
<div class="t" style="left:243.7px;top:1022.67px;font-size:11.5px;color:#c6c6c6;font-weight:normal;font-family:'Liberation Sans',sans-serif;letter-spacing:0.182px;">to marquee select.</div>
<div class="t" style="left:344px;top:1022.67px;font-size:11.5px;color:#f2f2f2;font-weight:bold;font-family:'Liberation Sans',sans-serif;letter-spacing:0.029px;">Click</div>
<div class="t" style="left:374.2px;top:1022.67px;font-size:11.5px;color:#c6c6c6;font-weight:normal;font-family:'Liberation Sans',sans-serif;letter-spacing:0.208px;">an object to select it.</div>
<div class="a" style="left:0px;top:1040px;width:1920px;height:40px;background:linear-gradient(90deg,#3a1521 0px,#3c1822 400px,#40201f 560px,#44271f 700px,#46291f 960px,#46291f 1120px,#45261f 1250px,#431f1d 1355px,#2c1c1e 1390px,#211e20 1430px,#1e2527 1480px,#1d2f33 1560px,#1f363b 1680px,#20393e 1920px);"></div>
<svg class="a" style="left:15px;top:1052px;" width="17" height="16" viewBox="0 0 17 16"><g fill="#ffffff"><rect x="0" y="0" width="7.8" height="7.3"/><rect x="8.8" y="0" width="8.2" height="7.3"/><rect x="0" y="8.3" width="7.8" height="7.7"/><rect x="8.8" y="8.3" width="8.2" height="7.7"/></g></svg>
<div class="a" style="left:48px;top:1040px;width:344px;height:40px;background:#f0f0f0;"></div>
<svg class="a" style="left:60px;top:1052px;" width="17" height="17" viewBox="0 0 17 17"><circle cx="10.5" cy="6.5" r="5.3" fill="none" stroke="#1a1a1a" stroke-width="1.3"/><path d="M6.8 10.2L1 16" stroke="#1a1a1a" stroke-width="1.5"/></svg>
<div class="t" style="left:87.5px;top:1053.73px;font-size:14.5px;color:#1e1e1e;font-weight:normal;font-family:'Liberation Sans',sans-serif;letter-spacing:-0.009px;">Type here to search</div>
<svg class="a" style="left:408px;top:1053px;" width="16" height="16" viewBox="0 0 16 16"><circle cx="8" cy="8" r="6.6" fill="none" stroke="#fff" stroke-width="1.6"/></svg>
<svg class="a" style="left:455px;top:1052px;" width="18" height="16" viewBox="0 0 18 16"><g fill="none" stroke="#fff" stroke-width="1.3"><rect x="2.5" y="4" width="10" height="8"/><path d="M0.5 2h14M0.5 14h14"/><path d="M16.5 2v3M16.5 7v3M16.5 12v2"/></g></svg>
<svg class="a" style="left:502px;top:1048px;" width="25" height="25" viewBox="0 0 25 25"><defs><linearGradient id="eg1" x1="0" y1="1" x2="1" y2="0"><stop offset="0" stop-color="#0b5fb8"/><stop offset="0.55" stop-color="#1e9ad8"/><stop offset="1" stop-color="#54e26a"/></linearGradient></defs><circle cx="12.5" cy="12.5" r="12" fill="url(#eg1)"/><path d="M3 14c0-4 3.5-6.5 7.5-6.5 3.2 0 5.5 1.8 5.5 4.3 0 1.5-1 2.5-2.5 2.5-2 0-3-1-3.5-2-1 3 1 6 5 6.5 2.5.3 5-.8 6.5-2.3-1.8 3.5-5.3 5.8-9.4 5.8C6.5 24.3 3 19.5 3 14z" fill="#0f4f9a"/></svg>
<div class="a" style="left:495px;top:1078px;width:40px;height:2px;background:#76b9ed;"></div>
<svg class="a" style="left:553px;top:1049px;" width="22" height="22" viewBox="0 0 22 22"><path d="M0 3h8l2 2h12v15H0z" fill="#e0a400"/><rect x="0" y="7" width="22" height="13" fill="#ffd45a"/><rect x="5" y="12" width="12" height="8" fill="#2d7cd0"/><rect x="8" y="12" width="6" height="3" fill="#ffd45a"/></svg>
<svg class="a" style="left:600px;top:1048px;" width="25" height="24" viewBox="0 0 25 24"><path d="M0 8L12.5 0 25 8v15H0z" fill="#0a64c0"/><path d="M0 8h25v15H0z" fill="#2a9ff0"/><path d="M0 8l12.5 8L25 8z" fill="#f2f2f2"/><path d="M0 23l12.5-8L25 23z" fill="#45b8f8"/></svg>
<svg class="a" style="left:653px;top:1047px;" width="16" height="26" viewBox="0 0 16 26"><path d="M11 0.5L4 9.5l5 3.5L4.5 25.5 12 15l-5-3.5z" fill="#f4f4f4"/><path d="M4 9.5l5 3.5M12 15l-5-3.5" stroke="#3a2a26" stroke-width="0.6"/></svg>
<svg class="a" style="left:699px;top:1050px;" width="24" height="21" viewBox="0 0 24 21"><g fill="#f4f4f4"><path d="M6 0L0 4l6 4 6-4z"/><path d="M18 0l-6 4 6 4 6-4z"/><path d="M0 12l6 4 6-4-6-4z"/><path d="M24 12l-6 4-6-4 6-4z"/><path d="M6 17.5l6 3.5 6-3.5-6-4z"/></g></svg>
<svg class="a" style="left:748px;top:1048px;" width="24" height="24" viewBox="0 0 24 24"><circle cx="12" cy="12" r="12" fill="#fff"/><g transform="translate(12 12) scale(1.45) translate(-12 -12)"><path d="M17.6 12.3c0-.5 0-.9-.1-1.3H12v2.5h3.2c-.2.9-.7 1.6-1.4 2.1v1.7h2.2c1.1-1.1 1.6-2.8 1.6-5z" fill="#4285f4"/><path d="M12 18c1.6 0 3-.5 3.9-1.5l-2.1-1.7c-.5.4-1.2.6-1.9.6-1.5 0-2.8-1-3.3-2.4H6.4v1.7C7.4 16.8 9.5 18 12 18z" fill="#34a853"/><path d="M8.7 13a3.6 3.6 0 0 1 0-2.3V9H6.4a6 6 0 0 0 0 5.4z" fill="#fbbc05"/><path d="M12 8.6c.9 0 1.7.3 2.3.9l1.8-1.8C15 6.7 13.6 6 12 6 9.5 6 7.4 7.3 6.4 9.3l2.3 1.7C9.2 9.6 10.5 8.6 12 8.6z" fill="#ea4335"/></g></svg>
<svg class="a" style="left:796px;top:1048px;" width="24" height="24" viewBox="0 0 24 24"><path d="M8 6V4a4 4 0 0 1 8 0v2" fill="none" stroke="#e8e8e8" stroke-width="1.5"/><rect x="1" y="6" width="22" height="17" fill="#f2f2f2"/><rect x="7.5" y="10.5" width="4" height="4" fill="#f25022"/><rect x="12.5" y="10.5" width="4" height="4" fill="#7fba00"/><rect x="7.5" y="15.5" width="4" height="4" fill="#00a4ef"/><rect x="12.5" y="15.5" width="4" height="4" fill="#ffb900"/></svg>
<div class="a" style="left:789px;top:1078px;width:40px;height:2px;background:#76b9ed;"></div>
<svg class="a" style="left:848px;top:1047px;" width="20" height="26" viewBox="0 0 20 26"><path d="M10 5.5a7.5 7.5 0 1 0 0.01 0zM10 9.2a3.3 3.3 0 1 1-0.01 0z" fill="#f0642a" fill-rule="evenodd"/><path d="M8.5 5.7C9.5 3.5 11 1.8 13 0.8c-0.6 1.5-0.5 3 0 4.6z" fill="#f0642a"/><path d="M11.5 20.3C10.5 22.5 9 24.2 7 25.2c0.6-1.5 0.5-3 0-4.6z" fill="#f0642a"/></svg>
<div class="a" style="left:838px;top:1078px;width:40px;height:2px;background:#76b9ed;"></div>
<svg class="a" style="left:894px;top:1048px;" width="25" height="25" viewBox="0 0 25 25"><circle cx="12.5" cy="12.5" r="12.5" fill="#1ed760"/><path d="M6 9c4.5-1.3 9.5-.8 13.5 1.3M6.8 12.7c3.8-1 7.8-.6 11 1.2M7.5 16.2c3-.7 6-.4 8.5 1" stroke="#111" stroke-width="1.9" stroke-linecap="round" fill="none"/></svg>
<div class="a" style="left:887px;top:1078px;width:40px;height:2px;background:#76b9ed;"></div>
<svg class="a" style="left:943px;top:1048px;" width="24" height="24" viewBox="0 0 24 24"><circle cx="12" cy="12" r="11.5" fill="#db4437"/><path d="M12 12L22 6.2A11.5 11.5 0 0 1 12 23.5z" fill="#ffcd40"/><path d="M12 12V23.5A11.5 11.5 0 0 1 2 6.2z" fill="#0f9d58"/><circle cx="12" cy="12" r="5.3" fill="#fff"/><circle cx="12" cy="12" r="4.2" fill="#4285f4"/></svg>
<div class="a" style="left:936px;top:1078px;width:40px;height:2px;background:#76b9ed;"></div>
<div class="a" style="left:981px;top:1040px;width:48px;height:40px;background:rgba(255,255,255,0.14);"></div>
<svg class="a" style="left:993px;top:1048px" width="24" height="24" viewBox="0 0 24 24"><rect width="24" height="24" fill="#ff9c58"/><polygon points="0,0 9.5,0 0,16" fill="#cf2651"/><g stroke="#cf2651" stroke-width="1.1"><line x1="9.5" y1="0" x2="24" y2="22"/><line x1="13.5" y1="0" x2="24" y2="16"/><line x1="7.2" y1="4" x2="20" y2="24"/><line x1="5" y1="7.5" x2="15.5" y2="24"/><line x1="3" y1="11" x2="11" y2="24"/></g></svg>
<div class="a" style="left:981px;top:1078px;width:48px;height:2px;background:#76b9ed;"></div>
<svg class="a" style="left:1419px;top:1050px;" width="24" height="21" viewBox="0 0 24 21"><circle cx="10" cy="10" r="9.3" fill="#1a8fe0" stroke="#fff" stroke-width="1.3"/><path d="M7 7.5a3 3 0 1 1 4 2.8c-.8.3-1 .8-1 1.7" stroke="#fff" stroke-width="1.8" fill="none"/><circle cx="10" cy="14.5" r="1.1" fill="#fff"/><circle cx="18" cy="15.5" r="4.5" fill="#ffb020"/><rect x="17.4" y="14" width="1.2" height="4" fill="#fff"/></svg>
<svg class="a" style="left:1489px;top:1051px;" width="21" height="19" viewBox="0 0 21 19"><path d="M5 12a4 4 0 0 1 0-8 5.5 5.5 0 0 1 10.5-1A4 4 0 0 1 16 12z" fill="#d8eaf8"/><path d="M6 14l-1 2.5M10 14l-1 3M14 14l-1 2.5" stroke="#3ea8f0" stroke-width="1.6" stroke-linecap="round"/></svg>
<div class="t" style="left:1520px;top:1054.57px;font-size:13.5px;color:#ffffff;font-weight:normal;font-family:'Liberation Sans',sans-serif;letter-spacing:-0.588px;">14°C</div>
<div class="t" style="left:1558px;top:1054.57px;font-size:13.5px;color:#ffffff;font-weight:normal;font-family:'Liberation Sans',sans-serif;letter-spacing:0.200px;">Raining now</div>
<svg class="a" style="left:1651px;top:1056px;" width="12" height="8" viewBox="0 0 12 8"><path d="M1 7l5-5.5L11 7" stroke="#fff" stroke-width="1.3" fill="none"/></svg>
<svg class="a" style="left:1675px;top:1052px;" width="13" height="17" viewBox="0 0 13 17"><rect x="1" y="4.5" width="7" height="8" rx="1.3" fill="none" stroke="#eee" stroke-width="1.1"/><path d="M8 7l3.5-1.8v6.6L8 10" fill="none" stroke="#eee" stroke-width="1.1"/><path d="M1.5 2a9 9 0 0 1 7 0M1.5 15a9 9 0 0 0 7 0" stroke="#eee" stroke-width="1" fill="none"/></svg>
<svg class="a" style="left:1697px;top:1054px;" width="16" height="11" viewBox="0 0 16 11"><path d="M3.5 10.5a3 3 0 0 1 0-6A4.5 4.5 0 0 1 12 3.5a3.5 3.5 0 0 1 .5 7z" fill="#e8e8e8"/></svg>
<svg class="a" style="left:1723px;top:1052px;" width="15" height="15" viewBox="0 0 15 15"><g fill="none" stroke-width="1.2"><path d="M2 13A11 11 0 0 1 13 2" stroke="#9a9a9a"/><path d="M5.5 13A7.5 7.5 0 0 1 13 5.5" stroke="#d8d8d8"/><path d="M9 13A4 4 0 0 1 13 9" stroke="#ffffff"/></g><circle cx="12.3" cy="12.3" r="1.5" fill="#fff"/></svg>
<svg class="a" style="left:1744px;top:1053px;" width="17" height="15" viewBox="0 0 17 15"><path d="M1 5h3l4-3.5v12L4 10H1z" fill="none" stroke="#fff" stroke-width="1.2"/><path d="M10.5 5a3 3 0 0 1 0 5M12.5 3a6 6 0 0 1 0 9M14.5 1.5a8.5 8.5 0 0 1 0 12" stroke="#fff" stroke-width="1.1" fill="none"/></svg>
<svg class="a" style="left:1773px;top:1052px;" width="16" height="17" viewBox="0 0 16 17"><path d="M3 15L13 2c1.2-1 2.5.3 1.6 1.5L5 16" stroke="#fff" stroke-width="1.2" fill="none"/><path d="M2 16c-1.5-2 0-5 2-4.5" stroke="#fff" stroke-width="1.1" fill="none"/><path d="M8 9c2-1 5 0 7 1" stroke="#fff" stroke-width="1" fill="none"/></svg>
<div class="t" style="left:1818px;top:1044.84px;font-size:12px;color:#ffffff;font-weight:normal;font-family:'Liberation Sans',sans-serif;letter-spacing:-0.757px;">10:32</div>
<div class="t" style="left:1802.7px;top:1062.84px;font-size:12px;color:#ffffff;font-weight:normal;font-family:'Liberation Sans',sans-serif;letter-spacing:-0.228px;">02/10/2021</div>
<svg class="a" style="left:1879px;top:1052px;" width="26" height="24" viewBox="0 0 26 24"><path d="M1 1h17v12H7l-4 3v-3H1z" fill="#f4f4f4"/><path d="M4 4h11M4 7h11M4 10h7" stroke="#333" stroke-width="1"/><circle cx="17" cy="15.5" r="7.8" fill="#2a2a2a" stroke="#888" stroke-width="1"/></svg>
<div class="t" style="left:1886px;top:1064.69px;font-size:11px;color:#ffffff;font-weight:normal;font-family:'Liberation Sans',sans-serif;">17</div>
<div class="a" style="left:1914px;top:1040px;width:1px;height:40px;background:#5a6a6c;"></div>
</body></html>
